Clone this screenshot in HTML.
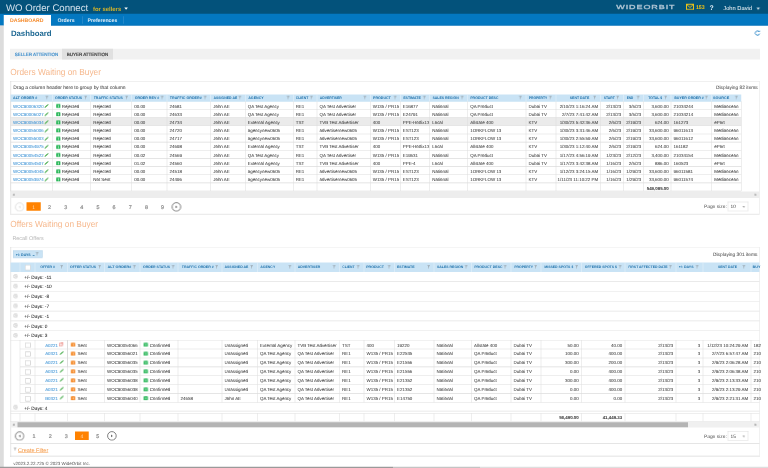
<!DOCTYPE html><html><head><meta charset="utf-8"><title>Dashboard</title><style>
*{box-sizing:border-box;margin:0;padding:0}
html,body{width:768px;height:468px;overflow:hidden;background:#fff}
body{font-family:"Liberation Sans",sans-serif;position:relative;color:#333;text-rendering:geometricPrecision;-webkit-font-smoothing:antialiased}
#root{position:absolute;left:0;top:0;width:3072px;height:1872px;transform:scale(.25);transform-origin:0 0;transform-style:preserve-3d}
.a{position:absolute;white-space:nowrap;line-height:1}
.t{font-size:17.8px;color:#444;-webkit-text-stroke:0.2px currentColor}
.h{font-size:14.4px;font-weight:bold;color:#2173ac}
.lnk{color:#3f94d6}
.r{text-align:right}
</style></head><body><div id="root">
<div class="a" style="left:0px;top:0px;width:3072px;height:56px;background:#03527b;"></div>
<div class="a" style="left:0px;top:55.2px;width:3072px;height:46.8px;background:#0378c1;"></div>
<div class="a" style="left:0px;top:99.2px;width:3072px;height:2.8px;background:#0670b8;"></div>
<div class="a" style="left:0px;top:102px;width:14.8px;height:1768px;background:#dcdcdc;"></div>
<div class="a" style="left:15.2px;top:59.6px;width:188.8px;height:44px;background:#fff;"></div>
<div class="a " style="left:24px;top:12px;font-size:38.4px;color:#d5e3ee;">WO Order Connect</div>
<div class="a " style="left:372px;top:24px;font-size:23.6px;color:#d8b528;font-weight:bold;">for sellers</div>
<svg class="a" style="left:495.6px;top:27.6px" width="16.8" height="12.8" viewBox="0 0 4 3"><path d="M0.3 0.4L3.7 0.4L2 2.6Z" fill="#fff"/></svg>
<div class="a " style="left:40px;top:72.4px;font-size:20.6px;font-weight:bold;color:#f58a2a;">DASHBOARD</div>
<div class="a " style="left:230px;top:70.4px;font-size:20.8px;font-weight:bold;color:#e6f0f8;">Orders</div>
<div class="a " style="left:350px;top:70.4px;font-size:20.8px;font-weight:bold;color:#e6f0f8;">Preferences</div>
<div class="a" style="left:327.8px;top:65.2px;width:2px;height:30px;background:#4596d0;"></div>
<div class="a" style="left:492.2px;top:65.2px;width:2px;height:30px;background:#4596d0;"></div>
<div class="a " style="left:2465.2px;top:18.4px;font-size:23.2px;color:#b0c5d4;-webkit-text-stroke:1.2px currentColor;letter-spacing:2.4px;transform:scaleX(1.55);transform-origin:0 0;">WIDEORBIT</div>
<svg class="a" style="left:2743.6px;top:15.2px" width="32" height="25.2" viewBox="0 0 9 7"><rect x="0.5" y="0.6" width="8" height="5.8" fill="none" stroke="#f5c816" stroke-width="1.15"/><path d="M0.7 1L4.5 4L8.3 1" fill="none" stroke="#f5c816" stroke-width="0.95"/></svg>
<div class="a " style="left:2783.6px;top:17.2px;font-size:21.2px;color:#f2c314;font-weight:bold;">153</div>
<div class="a " style="left:2838.4px;top:15.6px;font-size:27.2px;color:#dcebf5;font-weight:bold;">?</div>
<div class="a " style="left:2893.2px;top:20px;font-size:23px;color:#fff;">John David</div>
<svg class="a" style="left:3025.2px;top:28.8px" width="16" height="12" viewBox="0 0 4 3"><path d="M0.3 0.4L3.7 0.4L2 2.6Z" fill="#fff"/></svg>
<div class="a " style="left:43.6px;top:118.8px;font-size:31.2px;font-weight:bold;color:#1c6792;">Dashboard</div>
<svg class="a" style="left:3018px;top:120px" width="24" height="24" viewBox="0 0 6 6"><path d="M4.6 1.6A2.2 2.2 0 1 0 5.1 3.6" fill="none" stroke="#2a86c7" stroke-width="0.9"/><path d="M3.4 1.9L5.3 2.1L5.2 0.3Z" fill="#2a86c7"/></svg>
<div class="a" style="left:40px;top:194.8px;width:3000px;height:43.6px;background:#f1f1f1;"></div>
<div class="a" style="left:248px;top:194.8px;width:204px;height:43.6px;background:#e0e0e0;"></div>
<div class="a " style="left:58.8px;top:208.4px;font-size:18px;color:#4390cc;-webkit-text-stroke:0.8px currentColor;">SELLER ATTENTION</div>
<div class="a " style="left:266.8px;top:208.4px;font-size:18px;color:#3c3c3c;-webkit-text-stroke:0.8px currentColor;">BUYER ATTENTION</div>
<div class="a " style="left:40.8px;top:271.6px;font-size:35.6px;color:#f6b88d;transform:scaleX(0.935);transform-origin:0 0;">Orders Waiting on Buyer</div>
<div class="a" style="left:41.2px;top:323.2px;width:2998px;height:534.8px;background:#fff;border:2.4px solid #d9d9d9;"></div>
<div class="a t" style="left:53.2px;top:341.2px;font-size:19.6px;color:#444;">Drag a column header here to group by that column</div>
<div class="a t" style="left:2864px;top:340.8px;font-size:19.28px;color:#555;">Displaying 82 items</div>
<div class="a" style="left:42px;top:377.6px;width:2923.2px;height:29.2px;background:#c9e3f5;"></div>
<div class="a h" style="left:52px;top:384.6px;transform:scaleX(1.0196);transform-origin:0 0;">ALT ORDER #</div>
<svg class="a" style="left:181.2px;top:383.2px" width="13.6" height="15.2" viewBox="0 0 34 38"><path d="M2 2L32 2L20 17L20 34L14 36L14 17Z" fill="#9aa7b0"/></svg>
<div class="a h" style="left:220px;top:384.6px;transform:scaleX(0.9761);transform-origin:0 0;">ORDER STATUS</div>
<svg class="a" style="left:336.4px;top:383.2px" width="13.6" height="15.2" viewBox="0 0 34 38"><path d="M2 2L32 2L20 17L20 34L14 36L14 17Z" fill="#9aa7b0"/></svg>
<div class="a" style="left:207.6px;top:377.6px;width:2.4px;height:29.2px;background:#e9f3fa;"></div>
<div class="a h" style="left:375.2px;top:384.6px;transform:scaleX(0.9649);transform-origin:0 0;">TRAFFIC STATUS</div>
<svg class="a" style="left:500px;top:383.2px" width="13.6" height="15.2" viewBox="0 0 34 38"><path d="M2 2L32 2L20 17L20 34L14 36L14 17Z" fill="#9aa7b0"/></svg>
<div class="a" style="left:361.6px;top:377.6px;width:2.4px;height:29.2px;background:#e9f3fa;"></div>
<div class="a h" style="left:538.8px;top:384.6px;transform:scaleX(1.0079);transform-origin:0 0;">ORDER REV #</div>
<svg class="a" style="left:642.4px;top:383.2px" width="13.6" height="15.2" viewBox="0 0 34 38"><path d="M2 2L32 2L20 17L20 34L14 36L14 17Z" fill="#9aa7b0"/></svg>
<div class="a" style="left:525.6px;top:377.6px;width:2.4px;height:29.2px;background:#e9f3fa;"></div>
<div class="a h" style="left:678.8px;top:384.6px;transform:scaleX(1.0191);transform-origin:0 0;">TRAFFIC ORDER#</div>
<svg class="a" style="left:814.4px;top:383.2px" width="13.6" height="15.2" viewBox="0 0 34 38"><path d="M2 2L32 2L20 17L20 34L14 36L14 17Z" fill="#9aa7b0"/></svg>
<div class="a" style="left:666.8px;top:377.6px;width:2.4px;height:29.2px;background:#e9f3fa;"></div>
<div class="a h" style="left:854px;top:384.6px;transform:scaleX(0.9606);transform-origin:0 0;">ASSIGNED AE</div>
<svg class="a" style="left:953.2px;top:383.2px" width="13.6" height="15.2" viewBox="0 0 34 38"><path d="M2 2L32 2L20 17L20 34L14 36L14 17Z" fill="#9aa7b0"/></svg>
<div class="a" style="left:841.6px;top:377.6px;width:2.4px;height:29.2px;background:#e9f3fa;"></div>
<div class="a h" style="left:993.2px;top:384.6px;transform:scaleX(0.9998);transform-origin:0 0;">AGENCY</div>
<svg class="a" style="left:1146px;top:383.2px" width="13.6" height="15.2" viewBox="0 0 34 38"><path d="M2 2L32 2L20 17L20 34L14 36L14 17Z" fill="#9aa7b0"/></svg>
<div class="a" style="left:979.6px;top:377.6px;width:2.4px;height:29.2px;background:#e9f3fa;"></div>
<div class="a h" style="left:1183.2px;top:384.6px;transform:scaleX(0.9616);transform-origin:0 0;">CLIENT</div>
<svg class="a" style="left:1239.2px;top:383.2px" width="13.6" height="15.2" viewBox="0 0 34 38"><path d="M2 2L32 2L20 17L20 34L14 36L14 17Z" fill="#9aa7b0"/></svg>
<div class="a" style="left:1171.6px;top:377.6px;width:2.4px;height:29.2px;background:#e9f3fa;"></div>
<div class="a h" style="left:1278.8px;top:384.6px;transform:scaleX(0.9481);transform-origin:0 0;">ADVERTISER</div>
<svg class="a" style="left:1453.2px;top:383.2px" width="13.6" height="15.2" viewBox="0 0 34 38"><path d="M2 2L32 2L20 17L20 34L14 36L14 17Z" fill="#9aa7b0"/></svg>
<div class="a" style="left:1266.8px;top:377.6px;width:2.4px;height:29.2px;background:#e9f3fa;"></div>
<div class="a h" style="left:1492px;top:384.6px;transform:scaleX(1.0000);transform-origin:0 0;">PRODUCT</div>
<svg class="a" style="left:1574.4px;top:383.2px" width="13.6" height="15.2" viewBox="0 0 34 38"><path d="M2 2L32 2L20 17L20 34L14 36L14 17Z" fill="#9aa7b0"/></svg>
<div class="a" style="left:1479.6px;top:377.6px;width:2.4px;height:29.2px;background:#e9f3fa;"></div>
<div class="a h" style="left:1613.2px;top:384.6px;transform:scaleX(0.9758);transform-origin:0 0;">ESTIMATE</div>
<svg class="a" style="left:1691.2px;top:383.2px" width="13.6" height="15.2" viewBox="0 0 34 38"><path d="M2 2L32 2L20 17L20 34L14 36L14 17Z" fill="#9aa7b0"/></svg>
<div class="a" style="left:1599.6px;top:377.6px;width:2.4px;height:29.2px;background:#e9f3fa;"></div>
<div class="a h" style="left:1730px;top:384.6px;transform:scaleX(0.9631);transform-origin:0 0;">SALES REGION</div>
<svg class="a" style="left:1842.4px;top:383.2px" width="13.6" height="15.2" viewBox="0 0 34 38"><path d="M2 2L32 2L20 17L20 34L14 36L14 17Z" fill="#9aa7b0"/></svg>
<div class="a" style="left:1717.6px;top:377.6px;width:2.4px;height:29.2px;background:#e9f3fa;"></div>
<div class="a h" style="left:1881.2px;top:384.6px;transform:scaleX(0.9791);transform-origin:0 0;">PRODUCT DESC</div>
<svg class="a" style="left:2075.2px;top:383.2px" width="13.6" height="15.2" viewBox="0 0 34 38"><path d="M2 2L32 2L20 17L20 34L14 36L14 17Z" fill="#9aa7b0"/></svg>
<div class="a" style="left:1869.6px;top:377.6px;width:2.4px;height:29.2px;background:#e9f3fa;"></div>
<div class="a h" style="left:2114.8px;top:384.6px;transform:scaleX(0.9392);transform-origin:0 0;">PROPERTY</div>
<svg class="a" style="left:2195.2px;top:383.2px" width="13.6" height="15.2" viewBox="0 0 34 38"><path d="M2 2L32 2L20 17L20 34L14 36L14 17Z" fill="#9aa7b0"/></svg>
<div class="a" style="left:2102.8px;top:377.6px;width:2.4px;height:29.2px;background:#e9f3fa;"></div>
<div class="a h" style="left:2278.8px;top:384.6px;transform:scaleX(0.9685);transform-origin:0 0;">SENT DATE</div>
<svg class="a" style="left:2372.4px;top:383.2px" width="13.6" height="15.2" viewBox="0 0 34 38"><path d="M2 2L32 2L20 17L20 34L14 36L14 17Z" fill="#9aa7b0"/></svg>
<div class="a" style="left:2222.8px;top:377.6px;width:2.4px;height:29.2px;background:#e9f3fa;"></div>
<div class="a h" style="left:2414.8px;top:384.6px;transform:scaleX(0.9376);transform-origin:0 0;">START</div>
<svg class="a" style="left:2464px;top:383.2px" width="13.6" height="15.2" viewBox="0 0 34 38"><path d="M2 2L32 2L20 17L20 34L14 36L14 17Z" fill="#9aa7b0"/></svg>
<div class="a" style="left:2400.8px;top:377.6px;width:2.4px;height:29.2px;background:#e9f3fa;"></div>
<div class="a h" style="left:2506.8px;top:384.6px;transform:scaleX(0.8683);transform-origin:0 0;">END</div>
<svg class="a" style="left:2546px;top:383.2px" width="13.6" height="15.2" viewBox="0 0 34 38"><path d="M2 2L32 2L20 17L20 34L14 36L14 17Z" fill="#9aa7b0"/></svg>
<div class="a" style="left:2492.8px;top:377.6px;width:2.4px;height:29.2px;background:#e9f3fa;"></div>
<div class="a h" style="left:2592.8px;top:384.6px;transform:scaleX(0.9519);transform-origin:0 0;">TOTAL $</div>
<svg class="a" style="left:2656.4px;top:383.2px" width="13.6" height="15.2" viewBox="0 0 34 38"><path d="M2 2L32 2L20 17L20 34L14 36L14 17Z" fill="#9aa7b0"/></svg>
<div class="a" style="left:2572.8px;top:377.6px;width:2.4px;height:29.2px;background:#e9f3fa;"></div>
<div class="a h" style="left:2696.8px;top:384.6px;transform:scaleX(0.9998);transform-origin:0 0;">BUYER ORDER #</div>
<svg class="a" style="left:2819.2px;top:383.2px" width="13.6" height="15.2" viewBox="0 0 34 38"><path d="M2 2L32 2L20 17L20 34L14 36L14 17Z" fill="#9aa7b0"/></svg>
<div class="a" style="left:2682.8px;top:377.6px;width:2.4px;height:29.2px;background:#e9f3fa;"></div>
<div class="a h" style="left:2852px;top:384.6px;transform:scaleX(1.0518);transform-origin:0 0;">SOURCE</div>
<svg class="a" style="left:2939.2px;top:383.2px" width="13.6" height="15.2" viewBox="0 0 34 38"><path d="M2 2L32 2L20 17L20 34L14 36L14 17Z" fill="#9aa7b0"/></svg>
<div class="a" style="left:2845.6px;top:377.6px;width:2.4px;height:29.2px;background:#e9f3fa;"></div>
<div class="a" style="left:42px;top:436.64px;width:2923.2px;height:2.4px;background:#dcdcdc;"></div>
<div class="a t lnk" style="left:52px;top:416.2px;">WOC90006320</div>
<svg class="a" style="left:176px;top:416px" width="19.2" height="17.2" viewBox="0 0 44 44" preserveAspectRatio="none"><path d="M4 40L8 28L30 6L38 14L16 36Z" fill="#4caf50"/><path d="M32 4L36 0L44 8L40 12Z" fill="#3a9a3f"/></svg>
<svg class="a" style="left:224px;top:415.4px" width="18.8" height="18" viewBox="0 0 48 48" preserveAspectRatio="none"><rect x="2" y="2" width="44" height="44" rx="7" fill="#2ab759"/><path d="M24 12L33 24L27 24L27 36L21 36L21 24L15 24Z" fill="#fff" opacity="0.8"/></svg>
<div class="a t" style="left:246.8px;top:416.2px;">Rejected</div>
<div class="a t" style="left:372.8px;top:416.2px;">Rejected</div>
<div class="a t" style="left:536.8px;top:416.2px;">00.00</div>
<div class="a t" style="left:678px;top:416.2px;">24681</div>
<div class="a t" style="left:852.8px;top:416.2px;">John AE</div>
<div class="a t" style="left:990.8px;top:416.2px;">QA Test Agency</div>
<div class="a t" style="left:1182.8px;top:416.2px;">RE1</div>
<div class="a t" style="left:1278px;top:416.2px;">QA Test Advertiser</div>
<div class="a t" style="left:1490.8px;top:416.2px;">W135 / PR15</div>
<div class="a t" style="left:1610.8px;top:416.2px;">E16877</div>
<div class="a t" style="left:1728.8px;top:416.2px;">National</div>
<div class="a t" style="left:1880.8px;top:416.2px;">QA Product</div>
<div class="a t" style="left:2114px;top:416.2px;">Dubai TV</div>
<div class="a t r" style="left:2224px;top:416.2px;width:168.8px;">2/10/23 1:16:24 AM</div>
<div class="a t r" style="left:2402px;top:416.2px;width:82.8px;">2/13/23</div>
<div class="a t r" style="left:2494px;top:416.2px;width:70.8px;">3/5/23</div>
<div class="a t r" style="left:2574px;top:416.2px;width:100.8px;">3,600.00</div>
<div class="a t" style="left:2694px;top:416.2px;">21034244</div>
<div class="a t" style="left:2856.8px;top:416.2px;">Mediaocean</div>
<div class="a" style="left:42px;top:469.28px;width:2923.2px;height:2.4px;background:#dcdcdc;"></div>
<div class="a t lnk" style="left:52px;top:448.84px;">WOC90006027</div>
<svg class="a" style="left:176px;top:448.64px" width="19.2" height="17.2" viewBox="0 0 44 44" preserveAspectRatio="none"><path d="M4 40L8 28L30 6L38 14L16 36Z" fill="#4caf50"/><path d="M32 4L36 0L44 8L40 12Z" fill="#3a9a3f"/></svg>
<svg class="a" style="left:224px;top:448.04px" width="18.8" height="18" viewBox="0 0 48 48" preserveAspectRatio="none"><rect x="2" y="2" width="44" height="44" rx="7" fill="#2ab759"/><path d="M24 12L33 24L27 24L27 36L21 36L21 24L15 24Z" fill="#fff" opacity="0.8"/></svg>
<div class="a t" style="left:246.8px;top:448.84px;">Rejected</div>
<div class="a t" style="left:372.8px;top:448.84px;">Rejected</div>
<div class="a t" style="left:536.8px;top:448.84px;">00.00</div>
<div class="a t" style="left:678px;top:448.84px;">24633</div>
<div class="a t" style="left:852.8px;top:448.84px;">John AE</div>
<div class="a t" style="left:990.8px;top:448.84px;">QA Test Agency</div>
<div class="a t" style="left:1182.8px;top:448.84px;">RE1</div>
<div class="a t" style="left:1278px;top:448.84px;">QA Test Advertiser</div>
<div class="a t" style="left:1490.8px;top:448.84px;">W135 / PR15</div>
<div class="a t" style="left:1610.8px;top:448.84px;">E24791</div>
<div class="a t" style="left:1728.8px;top:448.84px;">National</div>
<div class="a t" style="left:1880.8px;top:448.84px;">QA Product</div>
<div class="a t" style="left:2114px;top:448.84px;">Dubai TV</div>
<div class="a t r" style="left:2224px;top:448.84px;width:168.8px;">2/7/23 7:41:42 AM</div>
<div class="a t r" style="left:2402px;top:448.84px;width:82.8px;">2/13/23</div>
<div class="a t r" style="left:2494px;top:448.84px;width:70.8px;">3/5/23</div>
<div class="a t r" style="left:2574px;top:448.84px;width:100.8px;">3,600.00</div>
<div class="a t" style="left:2694px;top:448.84px;">21034214</div>
<div class="a t" style="left:2856.8px;top:448.84px;">Mediaocean</div>
<div class="a" style="left:42px;top:470.48px;width:2923.2px;height:32.64px;background:#ebebeb;"></div>
<div class="a" style="left:42px;top:501.92px;width:2923.2px;height:2.4px;background:#dcdcdc;"></div>
<div class="a t lnk" style="left:52px;top:481.48px;">WOC90055034</div>
<svg class="a" style="left:176px;top:481.28px" width="19.2" height="17.2" viewBox="0 0 44 44" preserveAspectRatio="none"><path d="M4 40L8 28L30 6L38 14L16 36Z" fill="#4caf50"/><path d="M32 4L36 0L44 8L40 12Z" fill="#3a9a3f"/></svg>
<svg class="a" style="left:224px;top:480.68px" width="18.8" height="18" viewBox="0 0 48 48" preserveAspectRatio="none"><rect x="2" y="2" width="44" height="44" rx="7" fill="#2ab759"/><path d="M24 12L33 24L27 24L27 36L21 36L21 24L15 24Z" fill="#fff" opacity="0.8"/></svg>
<div class="a t" style="left:246.8px;top:481.48px;">Rejected</div>
<div class="a t" style="left:372.8px;top:481.48px;">Rejected</div>
<div class="a t" style="left:536.8px;top:481.48px;">00.00</div>
<div class="a t" style="left:678px;top:481.48px;">24734</div>
<div class="a t" style="left:852.8px;top:481.48px;">John AE</div>
<div class="a t" style="left:990.8px;top:481.48px;">External Agency</div>
<div class="a t" style="left:1182.8px;top:481.48px;">TST</div>
<div class="a t" style="left:1278px;top:481.48px;">TVB Test Advertiser</div>
<div class="a t" style="left:1490.8px;top:481.48px;">400</div>
<div class="a t" style="left:1610.8px;top:481.48px;">PPE-Hotfix13</div>
<div class="a t" style="left:1728.8px;top:481.48px;">Local</div>
<div class="a t" style="left:1880.8px;top:481.48px;">Allstate 400</div>
<div class="a t" style="left:2114px;top:481.48px;">KTV</div>
<div class="a t r" style="left:2224px;top:481.48px;width:168.8px;">1/30/23 5:42:36 AM</div>
<div class="a t r" style="left:2402px;top:481.48px;width:82.8px;">2/6/23</div>
<div class="a t r" style="left:2494px;top:481.48px;width:70.8px;">2/19/23</div>
<div class="a t r" style="left:2574px;top:481.48px;width:100.8px;">624.00</div>
<div class="a t" style="left:2694px;top:481.48px;">161273</div>
<div class="a t" style="left:2856.8px;top:481.48px;">ePort</div>
<div class="a" style="left:42px;top:534.56px;width:2923.2px;height:2.4px;background:#dcdcdc;"></div>
<div class="a t lnk" style="left:52px;top:514.12px;">WOC90055006</div>
<svg class="a" style="left:176px;top:513.92px" width="19.2" height="17.2" viewBox="0 0 44 44" preserveAspectRatio="none"><path d="M4 40L8 28L30 6L38 14L16 36Z" fill="#4caf50"/><path d="M32 4L36 0L44 8L40 12Z" fill="#3a9a3f"/></svg>
<svg class="a" style="left:224px;top:513.32px" width="18.8" height="18" viewBox="0 0 48 48" preserveAspectRatio="none"><rect x="2" y="2" width="44" height="44" rx="7" fill="#2ab759"/><path d="M24 12L33 24L27 24L27 36L21 36L21 24L15 24Z" fill="#fff" opacity="0.8"/></svg>
<div class="a t" style="left:246.8px;top:514.12px;">Rejected</div>
<div class="a t" style="left:372.8px;top:514.12px;">Rejected</div>
<div class="a t" style="left:536.8px;top:514.12px;">00.00</div>
<div class="a t" style="left:678px;top:514.12px;">24720</div>
<div class="a t" style="left:852.8px;top:514.12px;">John AE</div>
<div class="a t" style="left:990.8px;top:514.12px;">agencynew0605</div>
<div class="a t" style="left:1182.8px;top:514.12px;">RE1</div>
<div class="a t" style="left:1278px;top:514.12px;">advertisernew0605</div>
<div class="a t" style="left:1490.8px;top:514.12px;">W135 / PR15</div>
<div class="a t" style="left:1610.8px;top:514.12px;">EST123</div>
<div class="a t" style="left:1728.8px;top:514.12px;">National</div>
<div class="a t" style="left:1880.8px;top:514.12px;">1ORKFLOW 13</div>
<div class="a t" style="left:2114px;top:514.12px;">KTV</div>
<div class="a t r" style="left:2224px;top:514.12px;width:168.8px;">1/30/23 3:31:46 AM</div>
<div class="a t r" style="left:2402px;top:514.12px;width:82.8px;">2/6/23</div>
<div class="a t r" style="left:2494px;top:514.12px;width:70.8px;">2/19/23</div>
<div class="a t r" style="left:2574px;top:514.12px;width:100.8px;">33,600.00</div>
<div class="a t" style="left:2694px;top:514.12px;">96011613</div>
<div class="a t" style="left:2856.8px;top:514.12px;">Mediaocean</div>
<div class="a" style="left:42px;top:567.2px;width:2923.2px;height:2.4px;background:#dcdcdc;"></div>
<div class="a t lnk" style="left:52px;top:546.76px;">WOC90055003</div>
<svg class="a" style="left:176px;top:546.56px" width="19.2" height="17.2" viewBox="0 0 44 44" preserveAspectRatio="none"><path d="M4 40L8 28L30 6L38 14L16 36Z" fill="#4caf50"/><path d="M32 4L36 0L44 8L40 12Z" fill="#3a9a3f"/></svg>
<svg class="a" style="left:224px;top:545.96px" width="18.8" height="18" viewBox="0 0 48 48" preserveAspectRatio="none"><rect x="2" y="2" width="44" height="44" rx="7" fill="#2ab759"/><path d="M24 12L33 24L27 24L27 36L21 36L21 24L15 24Z" fill="#fff" opacity="0.8"/></svg>
<div class="a t" style="left:246.8px;top:546.76px;">Rejected</div>
<div class="a t" style="left:372.8px;top:546.76px;">Rejected</div>
<div class="a t" style="left:536.8px;top:546.76px;">00.00</div>
<div class="a t" style="left:678px;top:546.76px;">24717</div>
<div class="a t" style="left:852.8px;top:546.76px;">John AE</div>
<div class="a t" style="left:990.8px;top:546.76px;">agencynew0605</div>
<div class="a t" style="left:1182.8px;top:546.76px;">RE1</div>
<div class="a t" style="left:1278px;top:546.76px;">advertisernew0605</div>
<div class="a t" style="left:1490.8px;top:546.76px;">W135 / PR15</div>
<div class="a t" style="left:1610.8px;top:546.76px;">EST123</div>
<div class="a t" style="left:1728.8px;top:546.76px;">National</div>
<div class="a t" style="left:1880.8px;top:546.76px;">1ORKFLOW 13</div>
<div class="a t" style="left:2114px;top:546.76px;">KTV</div>
<div class="a t r" style="left:2224px;top:546.76px;width:168.8px;">1/30/23 2:55:59 AM</div>
<div class="a t r" style="left:2402px;top:546.76px;width:82.8px;">2/6/23</div>
<div class="a t r" style="left:2494px;top:546.76px;width:70.8px;">2/19/23</div>
<div class="a t r" style="left:2574px;top:546.76px;width:100.8px;">33,600.00</div>
<div class="a t" style="left:2694px;top:546.76px;">96011612</div>
<div class="a t" style="left:2856.8px;top:546.76px;">Mediaocean</div>
<div class="a" style="left:42px;top:599.84px;width:2923.2px;height:2.4px;background:#dcdcdc;"></div>
<div class="a t lnk" style="left:52px;top:579.4px;">WOC90054975</div>
<svg class="a" style="left:176px;top:579.2px" width="19.2" height="17.2" viewBox="0 0 44 44" preserveAspectRatio="none"><path d="M4 40L8 28L30 6L38 14L16 36Z" fill="#4caf50"/><path d="M32 4L36 0L44 8L40 12Z" fill="#3a9a3f"/></svg>
<svg class="a" style="left:224px;top:578.6px" width="18.8" height="18" viewBox="0 0 48 48" preserveAspectRatio="none"><rect x="2" y="2" width="44" height="44" rx="7" fill="#2ab759"/><path d="M24 12L33 24L27 24L27 36L21 36L21 24L15 24Z" fill="#fff" opacity="0.8"/></svg>
<div class="a t" style="left:246.8px;top:579.4px;">Rejected</div>
<div class="a t" style="left:372.8px;top:579.4px;">Rejected</div>
<div class="a t" style="left:536.8px;top:579.4px;">00.00</div>
<div class="a t" style="left:678px;top:579.4px;">24698</div>
<div class="a t" style="left:852.8px;top:579.4px;">John AE</div>
<div class="a t" style="left:990.8px;top:579.4px;">External Agency</div>
<div class="a t" style="left:1182.8px;top:579.4px;">TST</div>
<div class="a t" style="left:1278px;top:579.4px;">TVB Test Advertiser</div>
<div class="a t" style="left:1490.8px;top:579.4px;">400</div>
<div class="a t" style="left:1610.8px;top:579.4px;">PPE-Hotfix13</div>
<div class="a t" style="left:1728.8px;top:579.4px;">Local</div>
<div class="a t" style="left:1880.8px;top:579.4px;">Allstate 400</div>
<div class="a t" style="left:2114px;top:579.4px;">KTV</div>
<div class="a t r" style="left:2224px;top:579.4px;width:168.8px;">1/30/23 1:12:40 AM</div>
<div class="a t r" style="left:2402px;top:579.4px;width:82.8px;">2/6/23</div>
<div class="a t r" style="left:2494px;top:579.4px;width:70.8px;">2/19/23</div>
<div class="a t r" style="left:2574px;top:579.4px;width:100.8px;">624.00</div>
<div class="a t" style="left:2694px;top:579.4px;">161182</div>
<div class="a t" style="left:2856.8px;top:579.4px;">ePort</div>
<div class="a" style="left:42px;top:632.48px;width:2923.2px;height:2.4px;background:#dcdcdc;"></div>
<div class="a t lnk" style="left:52px;top:612.04px;">WOC90054522</div>
<svg class="a" style="left:176px;top:611.84px" width="19.2" height="17.2" viewBox="0 0 44 44" preserveAspectRatio="none"><path d="M4 40L8 28L30 6L38 14L16 36Z" fill="#4caf50"/><path d="M32 4L36 0L44 8L40 12Z" fill="#3a9a3f"/></svg>
<svg class="a" style="left:224px;top:611.24px" width="18.8" height="18" viewBox="0 0 48 48" preserveAspectRatio="none"><rect x="2" y="2" width="44" height="44" rx="7" fill="#2ab759"/><path d="M24 12L33 24L27 24L27 36L21 36L21 24L15 24Z" fill="#fff" opacity="0.8"/></svg>
<div class="a t" style="left:246.8px;top:612.04px;">Rejected</div>
<div class="a t" style="left:372.8px;top:612.04px;">Rejected</div>
<div class="a t" style="left:536.8px;top:612.04px;">00.02</div>
<div class="a t" style="left:678px;top:612.04px;">24569</div>
<div class="a t" style="left:852.8px;top:612.04px;">John AE</div>
<div class="a t" style="left:990.8px;top:612.04px;">QA Test Agency</div>
<div class="a t" style="left:1182.8px;top:612.04px;">RE1</div>
<div class="a t" style="left:1278px;top:612.04px;">QA Test Advertiser</div>
<div class="a t" style="left:1490.8px;top:612.04px;">W135 / PR15</div>
<div class="a t" style="left:1610.8px;top:612.04px;">E19531</div>
<div class="a t" style="left:1728.8px;top:612.04px;">National</div>
<div class="a t" style="left:1880.8px;top:612.04px;">QA Product</div>
<div class="a t" style="left:2114px;top:612.04px;">Dubai TV</div>
<div class="a t r" style="left:2224px;top:612.04px;width:168.8px;">1/17/23 4:56:19 AM</div>
<div class="a t r" style="left:2402px;top:612.04px;width:82.8px;">1/23/23</div>
<div class="a t r" style="left:2494px;top:612.04px;width:70.8px;">2/12/23</div>
<div class="a t r" style="left:2574px;top:612.04px;width:100.8px;">3,400.00</div>
<div class="a t" style="left:2694px;top:612.04px;">21034154</div>
<div class="a t" style="left:2856.8px;top:612.04px;">Mediaocean</div>
<div class="a" style="left:42px;top:665.12px;width:2923.2px;height:2.4px;background:#dcdcdc;"></div>
<div class="a t lnk" style="left:52px;top:644.68px;">WOC90054507</div>
<svg class="a" style="left:176px;top:644.48px" width="19.2" height="17.2" viewBox="0 0 44 44" preserveAspectRatio="none"><path d="M4 40L8 28L30 6L38 14L16 36Z" fill="#4caf50"/><path d="M32 4L36 0L44 8L40 12Z" fill="#3a9a3f"/></svg>
<svg class="a" style="left:224px;top:643.88px" width="18.8" height="18" viewBox="0 0 48 48" preserveAspectRatio="none"><rect x="2" y="2" width="44" height="44" rx="7" fill="#2ab759"/><path d="M24 12L33 24L27 24L27 36L21 36L21 24L15 24Z" fill="#fff" opacity="0.8"/></svg>
<div class="a t" style="left:246.8px;top:644.68px;">Rejected</div>
<div class="a t" style="left:372.8px;top:644.68px;">Rejected</div>
<div class="a t" style="left:536.8px;top:644.68px;">01.02</div>
<div class="a t" style="left:678px;top:644.68px;">24560</div>
<div class="a t" style="left:852.8px;top:644.68px;">John AE</div>
<div class="a t" style="left:990.8px;top:644.68px;">External Agency</div>
<div class="a t" style="left:1182.8px;top:644.68px;">TST</div>
<div class="a t" style="left:1278px;top:644.68px;">TVB Test Advertiser</div>
<div class="a t" style="left:1490.8px;top:644.68px;">400</div>
<div class="a t" style="left:1610.8px;top:644.68px;">PPE-4</div>
<div class="a t" style="left:1728.8px;top:644.68px;">Local</div>
<div class="a t" style="left:1880.8px;top:644.68px;">Allstate 400</div>
<div class="a t" style="left:2114px;top:644.68px;">Dubai TV</div>
<div class="a t r" style="left:2224px;top:644.68px;width:168.8px;">1/17/23 3:42:38 AM</div>
<div class="a t r" style="left:2402px;top:644.68px;width:82.8px;">1/16/23</div>
<div class="a t r" style="left:2494px;top:644.68px;width:70.8px;">2/5/23</div>
<div class="a t r" style="left:2574px;top:644.68px;width:100.8px;">886.00</div>
<div class="a t" style="left:2694px;top:644.68px;">160523</div>
<div class="a t" style="left:2856.8px;top:644.68px;">ePort</div>
<div class="a" style="left:42px;top:697.76px;width:2923.2px;height:2.4px;background:#dcdcdc;"></div>
<div class="a t lnk" style="left:52px;top:677.32px;">WOC90054045</div>
<svg class="a" style="left:176px;top:677.12px" width="19.2" height="17.2" viewBox="0 0 44 44" preserveAspectRatio="none"><path d="M4 40L8 28L30 6L38 14L16 36Z" fill="#4caf50"/><path d="M32 4L36 0L44 8L40 12Z" fill="#3a9a3f"/></svg>
<svg class="a" style="left:224px;top:676.52px" width="18.8" height="18" viewBox="0 0 48 48" preserveAspectRatio="none"><rect x="2" y="2" width="44" height="44" rx="7" fill="#2ab759"/><path d="M24 12L33 24L27 24L27 36L21 36L21 24L15 24Z" fill="#fff" opacity="0.8"/></svg>
<div class="a t" style="left:246.8px;top:677.32px;">Rejected</div>
<div class="a t" style="left:372.8px;top:677.32px;">Rejected</div>
<div class="a t" style="left:536.8px;top:677.32px;">00.00</div>
<div class="a t" style="left:678px;top:677.32px;">24518</div>
<div class="a t" style="left:852.8px;top:677.32px;">John AE</div>
<div class="a t" style="left:990.8px;top:677.32px;">agencynew0605</div>
<div class="a t" style="left:1182.8px;top:677.32px;">RE1</div>
<div class="a t" style="left:1278px;top:677.32px;">advertisernew0605</div>
<div class="a t" style="left:1490.8px;top:677.32px;">W135 / PR15</div>
<div class="a t" style="left:1610.8px;top:677.32px;">EST123</div>
<div class="a t" style="left:1728.8px;top:677.32px;">National</div>
<div class="a t" style="left:1880.8px;top:677.32px;">1ORKFLOW 13</div>
<div class="a t" style="left:2114px;top:677.32px;">KTV</div>
<div class="a t r" style="left:2224px;top:677.32px;width:168.8px;">1/12/23 3:24:15 AM</div>
<div class="a t r" style="left:2402px;top:677.32px;width:82.8px;">1/16/23</div>
<div class="a t r" style="left:2494px;top:677.32px;width:70.8px;">1/29/23</div>
<div class="a t r" style="left:2574px;top:677.32px;width:100.8px;">33,600.00</div>
<div class="a t" style="left:2694px;top:677.32px;">96011581</div>
<div class="a t" style="left:2856.8px;top:677.32px;">Mediaocean</div>
<div class="a" style="left:42px;top:730.4px;width:2923.2px;height:2.4px;background:#dcdcdc;"></div>
<div class="a t lnk" style="left:52px;top:709.96px;">WOC90053974</div>
<svg class="a" style="left:176px;top:709.76px" width="19.2" height="17.2" viewBox="0 0 44 44" preserveAspectRatio="none"><path d="M4 40L8 28L30 6L38 14L16 36Z" fill="#4caf50"/><path d="M32 4L36 0L44 8L40 12Z" fill="#3a9a3f"/></svg>
<svg class="a" style="left:224px;top:709.16px" width="18.8" height="18" viewBox="0 0 48 48" preserveAspectRatio="none"><rect x="2" y="2" width="44" height="44" rx="7" fill="#2ab759"/><path d="M24 12L33 24L27 24L27 36L21 36L21 24L15 24Z" fill="#fff" opacity="0.8"/></svg>
<div class="a t" style="left:246.8px;top:709.96px;">Rejected</div>
<div class="a t" style="left:372.8px;top:709.96px;">Not Sent</div>
<div class="a t" style="left:536.8px;top:709.96px;">00.00</div>
<div class="a t" style="left:678px;top:709.96px;">24496</div>
<div class="a t" style="left:852.8px;top:709.96px;">John AE</div>
<div class="a t" style="left:990.8px;top:709.96px;">agencynew0605</div>
<div class="a t" style="left:1182.8px;top:709.96px;">RE1</div>
<div class="a t" style="left:1278px;top:709.96px;">advertisernew0605</div>
<div class="a t" style="left:1490.8px;top:709.96px;">W135 / PR15</div>
<div class="a t" style="left:1610.8px;top:709.96px;">EST123</div>
<div class="a t" style="left:1728.8px;top:709.96px;">National</div>
<div class="a t" style="left:1880.8px;top:709.96px;">1ORKFLOW 13</div>
<div class="a t" style="left:2114px;top:709.96px;">KTV</div>
<div class="a t r" style="left:2224px;top:709.96px;width:168.8px;">1/11/23 11:10:22 PM</div>
<div class="a t r" style="left:2402px;top:709.96px;width:82.8px;">1/16/23</div>
<div class="a t r" style="left:2494px;top:709.96px;width:70.8px;">1/29/23</div>
<div class="a t r" style="left:2574px;top:709.96px;width:100.8px;">33,600.00</div>
<div class="a t" style="left:2694px;top:709.96px;">96011574</div>
<div class="a t" style="left:2856.8px;top:709.96px;">Mediaocean</div>
<div class="a" style="left:42px;top:763.2px;width:2923.2px;height:2.4px;background:#dcdcdc;"></div>
<div class="a t r" style="left:2574px;top:743.6px;width:100.8px;font-weight:bold;font-size:17.6px;">549,065.00</div>
<div class="a" style="left:40.8px;top:405.2px;width:2.4px;height:359.2px;background:#dcdcdc;"></div>
<div class="a" style="left:207.6px;top:405.2px;width:2.4px;height:359.2px;background:#dcdcdc;"></div>
<div class="a" style="left:361.6px;top:405.2px;width:2.4px;height:359.2px;background:#dcdcdc;"></div>
<div class="a" style="left:525.6px;top:405.2px;width:2.4px;height:359.2px;background:#dcdcdc;"></div>
<div class="a" style="left:666.8px;top:405.2px;width:2.4px;height:359.2px;background:#dcdcdc;"></div>
<div class="a" style="left:841.6px;top:405.2px;width:2.4px;height:359.2px;background:#dcdcdc;"></div>
<div class="a" style="left:979.6px;top:405.2px;width:2.4px;height:359.2px;background:#dcdcdc;"></div>
<div class="a" style="left:1171.6px;top:405.2px;width:2.4px;height:359.2px;background:#dcdcdc;"></div>
<div class="a" style="left:1266.8px;top:405.2px;width:2.4px;height:359.2px;background:#dcdcdc;"></div>
<div class="a" style="left:1479.6px;top:405.2px;width:2.4px;height:359.2px;background:#dcdcdc;"></div>
<div class="a" style="left:1599.6px;top:405.2px;width:2.4px;height:359.2px;background:#dcdcdc;"></div>
<div class="a" style="left:1717.6px;top:405.2px;width:2.4px;height:359.2px;background:#dcdcdc;"></div>
<div class="a" style="left:1869.6px;top:405.2px;width:2.4px;height:359.2px;background:#dcdcdc;"></div>
<div class="a" style="left:2102.8px;top:405.2px;width:2.4px;height:359.2px;background:#dcdcdc;"></div>
<div class="a" style="left:2222.8px;top:405.2px;width:2.4px;height:359.2px;background:#dcdcdc;"></div>
<div class="a" style="left:2400.8px;top:405.2px;width:2.4px;height:359.2px;background:#dcdcdc;"></div>
<div class="a" style="left:2492.8px;top:405.2px;width:2.4px;height:359.2px;background:#dcdcdc;"></div>
<div class="a" style="left:2572.8px;top:405.2px;width:2.4px;height:359.2px;background:#dcdcdc;"></div>
<div class="a" style="left:2682.8px;top:405.2px;width:2.4px;height:359.2px;background:#dcdcdc;"></div>
<div class="a" style="left:2845.6px;top:405.2px;width:2.4px;height:359.2px;background:#dcdcdc;"></div>
<div class="a" style="left:2964px;top:405.2px;width:2.4px;height:359.2px;background:#dcdcdc;"></div>
<div class="a" style="left:42.4px;top:765.6px;width:2995.6px;height:26.4px;background:#ededed;"></div>
<svg class="a" style="left:50.4px;top:773.6px" width="9.6" height="10.4" viewBox="0 0 24 26"><path d="M20 2L4 13L20 24Z" fill="#777"/></svg>
<svg class="a" style="left:3018.4px;top:773.6px" width="9.6" height="10.4" viewBox="0 0 24 26"><path d="M4 2L20 13L4 24Z" fill="#777"/></svg>
<svg class="a" style="left:58.8px;top:808.8px" width="38.4" height="38.4" viewBox="-4.8 -4.8 9.6 9.6"><circle cx="0" cy="0" r="4.2" fill="#fff" stroke="#dcdcdc" stroke-width="0.85"/><path d="M0.9 -1.3L-0.9 0L0.9 1.3Z" fill="#dcdcdc"/></svg>
<div class="a" style="left:106.4px;top:808.8px;width:56.8px;height:34.4px;background:#ff8200;"></div>
<div class="a " style="left:106.4px;top:817.6px;width:56.8px;text-align:center;font-size:20px;color:#ffd9ae;">1</div>
<div class="a " style="left:178px;top:817.6px;width:40px;text-align:center;font-size:21.6px;color:#8e8e8e;-webkit-text-stroke:0.88px currentColor;">2</div>
<div class="a " style="left:242.6px;top:817.6px;width:40px;text-align:center;font-size:21.6px;color:#8e8e8e;-webkit-text-stroke:0.88px currentColor;">3</div>
<div class="a " style="left:307.2px;top:817.6px;width:40px;text-align:center;font-size:21.6px;color:#8e8e8e;-webkit-text-stroke:0.88px currentColor;">4</div>
<div class="a " style="left:371.8px;top:817.6px;width:40px;text-align:center;font-size:21.6px;color:#8e8e8e;-webkit-text-stroke:0.88px currentColor;">5</div>
<div class="a " style="left:436.4px;top:817.6px;width:40px;text-align:center;font-size:21.6px;color:#8e8e8e;-webkit-text-stroke:0.88px currentColor;">6</div>
<div class="a " style="left:501px;top:817.6px;width:40px;text-align:center;font-size:21.6px;color:#8e8e8e;-webkit-text-stroke:0.88px currentColor;">7</div>
<div class="a " style="left:565.6px;top:817.6px;width:40px;text-align:center;font-size:21.6px;color:#8e8e8e;-webkit-text-stroke:0.88px currentColor;">8</div>
<div class="a " style="left:630.2px;top:817.6px;width:40px;text-align:center;font-size:21.6px;color:#8e8e8e;-webkit-text-stroke:0.88px currentColor;">9</div>
<svg class="a" style="left:686.4px;top:807.6px" width="39.2" height="39.2" viewBox="-4.8999999999999995 -4.8999999999999995 9.799999999999999 9.799999999999999"><circle cx="0" cy="0" r="4.3" fill="#fff" stroke="#686868" stroke-width="0.85"/><path d="M-0.9 -1.3L0.9 0L-0.9 1.3Z" fill="#686868"/></svg>
<div class="a " style="left:2815.6px;top:818px;font-size:19.6px;color:#555;">Page size:</div>
<div class="a" style="left:2910.8px;top:806.4px;width:83.2px;height:38.4px;background:#fff;border:2.4px solid #ddd;"></div>
<div class="a " style="left:2922.4px;top:818px;font-size:19.2px;color:#444;">10</div>
<svg class="a" style="left:2970.4px;top:824px" width="10.4" height="8" viewBox="0 0 26 20"><path d="M2 3L24 3L13 17Z" fill="#777"/></svg>
<div class="a " style="left:40.8px;top:877.2px;font-size:35.6px;color:#f6b88d;transform:scaleX(0.935);transform-origin:0 0;">Offers Waiting on Buyer</div>
<div class="a " style="left:49.6px;top:942.8px;font-size:21.8px;color:#b8b8b8;">Recall Offers</div>
<div class="a" style="left:41.2px;top:986.4px;width:2998px;height:839.6px;background:#fff;border:2.4px solid #d9d9d9;overflow:hidden;"></div>
<div class="a" style="left:52px;top:1001.2px;width:118.4px;height:31.2px;background:#c9e3f5;border:2px solid #b9d6ea;"></div>
<div class="a h" style="left:63.2px;top:1010.8px;">+/- DAYS</div>
<svg class="a" style="left:129.2px;top:1020px" width="9.6" height="4.8" viewBox="0 0 24 12"><path d="M0 0L24 0L24 12Z" fill="#1d6fa5"/></svg>
<svg class="a" style="left:142.4px;top:1008.4px" width="13.6" height="15.2" viewBox="0 0 34 38"><path d="M2 2L32 2L20 17L20 34L14 36L14 17Z" fill="#9aa7b0"/></svg>
<div class="a t" style="left:2852px;top:1008.4px;font-size:19.28px;color:#555;">Displaying 301 items</div>
<div class="a" style="left:42.4px;top:1049.6px;width:2995.6px;height:38.4px;background:#c9e3f5;"></div>
<div class="a" style="left:100px;top:1059.2px;width:23.2px;height:21.6px;background:#fff;border:2px solid #c8c8c8;border-radius:3.2px;"></div>
<div class="a" style="left:78.8px;top:1049.6px;width:2.4px;height:38.4px;background:#e9f3fa;"></div>
<div class="a" style="left:138.8px;top:1049.6px;width:2.4px;height:38.4px;background:#e9f3fa;"></div>
<div class="a h" style="left:160.8px;top:1062.4px;transform:scaleX(0.9670);transform-origin:0 0;">OFFER #</div>
<svg class="a" style="left:240px;top:1060.4px" width="13.6" height="15.2" viewBox="0 0 34 38"><path d="M2 2L32 2L20 17L20 34L14 36L14 17Z" fill="#9aa7b0"/></svg>
<div class="a" style="left:268px;top:1049.6px;width:2.4px;height:38.4px;background:#e9f3fa;"></div>
<div class="a h" style="left:280.4px;top:1062.4px;transform:scaleX(0.9606);transform-origin:0 0;">OFFER STATUS</div>
<svg class="a" style="left:392px;top:1060.4px" width="13.6" height="15.2" viewBox="0 0 34 38"><path d="M2 2L32 2L20 17L20 34L14 36L14 17Z" fill="#9aa7b0"/></svg>
<div class="a" style="left:416.8px;top:1049.6px;width:2.4px;height:38.4px;background:#e9f3fa;"></div>
<div class="a h" style="left:430px;top:1062.4px;transform:scaleX(1.0469);transform-origin:0 0;">ALT ORDER#</div>
<svg class="a" style="left:531.2px;top:1060.4px" width="13.6" height="15.2" viewBox="0 0 34 38"><path d="M2 2L32 2L20 17L20 34L14 36L14 17Z" fill="#9aa7b0"/></svg>
<div class="a" style="left:558.8px;top:1049.6px;width:2.4px;height:38.4px;background:#e9f3fa;"></div>
<div class="a h" style="left:572px;top:1062.4px;transform:scaleX(0.9689);transform-origin:0 0;">ORDER STATUS</div>
<svg class="a" style="left:686px;top:1060.4px" width="13.6" height="15.2" viewBox="0 0 34 38"><path d="M2 2L32 2L20 17L20 34L14 36L14 17Z" fill="#9aa7b0"/></svg>
<div class="a" style="left:710.8px;top:1049.6px;width:2.4px;height:38.4px;background:#e9f3fa;"></div>
<div class="a h" style="left:726.8px;top:1062.4px;transform:scaleX(0.9876);transform-origin:0 0;">TRAFFIC ORDER #</div>
<svg class="a" style="left:860.4px;top:1060.4px" width="13.6" height="15.2" viewBox="0 0 34 38"><path d="M2 2L32 2L20 17L20 34L14 36L14 17Z" fill="#9aa7b0"/></svg>
<div class="a" style="left:886.8px;top:1049.6px;width:2.4px;height:38.4px;background:#e9f3fa;"></div>
<div class="a h" style="left:898.4px;top:1062.4px;transform:scaleX(0.9687);transform-origin:0 0;">ASSIGNED AE</div>
<svg class="a" style="left:1000px;top:1060.4px" width="13.6" height="15.2" viewBox="0 0 34 38"><path d="M2 2L32 2L20 17L20 34L14 36L14 17Z" fill="#9aa7b0"/></svg>
<div class="a" style="left:1028.8px;top:1049.6px;width:2.4px;height:38.4px;background:#e9f3fa;"></div>
<div class="a h" style="left:1040.8px;top:1062.4px;transform:scaleX(0.9739);transform-origin:0 0;">AGENCY</div>
<svg class="a" style="left:1153.2px;top:1060.4px" width="13.6" height="15.2" viewBox="0 0 34 38"><path d="M2 2L32 2L20 17L20 34L14 36L14 17Z" fill="#9aa7b0"/></svg>
<div class="a" style="left:1178.8px;top:1049.6px;width:2.4px;height:38.4px;background:#e9f3fa;"></div>
<div class="a h" style="left:1190.8px;top:1062.4px;transform:scaleX(0.9697);transform-origin:0 0;">ADVERTISER</div>
<svg class="a" style="left:1330.4px;top:1060.4px" width="13.6" height="15.2" viewBox="0 0 34 38"><path d="M2 2L32 2L20 17L20 34L14 36L14 17Z" fill="#9aa7b0"/></svg>
<div class="a" style="left:1356.8px;top:1049.6px;width:2.4px;height:38.4px;background:#e9f3fa;"></div>
<div class="a h" style="left:1369.2px;top:1062.4px;transform:scaleX(0.9385);transform-origin:0 0;">CLIENT</div>
<svg class="a" style="left:1426px;top:1060.4px" width="13.6" height="15.2" viewBox="0 0 34 38"><path d="M2 2L32 2L20 17L20 34L14 36L14 17Z" fill="#9aa7b0"/></svg>
<div class="a" style="left:1454.8px;top:1049.6px;width:2.4px;height:38.4px;background:#e9f3fa;"></div>
<div class="a h" style="left:1464.8px;top:1062.4px;transform:scaleX(1.0000);transform-origin:0 0;">PRODUCT</div>
<svg class="a" style="left:1550.4px;top:1060.4px" width="13.6" height="15.2" viewBox="0 0 34 38"><path d="M2 2L32 2L20 17L20 34L14 36L14 17Z" fill="#9aa7b0"/></svg>
<div class="a" style="left:1576.8px;top:1049.6px;width:2.4px;height:38.4px;background:#e9f3fa;"></div>
<div class="a h" style="left:1588px;top:1062.4px;transform:scaleX(0.9758);transform-origin:0 0;">ESTIMATE</div>
<svg class="a" style="left:1708.4px;top:1060.4px" width="13.6" height="15.2" viewBox="0 0 34 38"><path d="M2 2L32 2L20 17L20 34L14 36L14 17Z" fill="#9aa7b0"/></svg>
<div class="a" style="left:1734.8px;top:1049.6px;width:2.4px;height:38.4px;background:#e9f3fa;"></div>
<div class="a h" style="left:1748px;top:1062.4px;transform:scaleX(0.9668);transform-origin:0 0;">SALES REGION</div>
<svg class="a" style="left:1858px;top:1060.4px" width="13.6" height="15.2" viewBox="0 0 34 38"><path d="M2 2L32 2L20 17L20 34L14 36L14 17Z" fill="#9aa7b0"/></svg>
<div class="a" style="left:1884.8px;top:1049.6px;width:2.4px;height:38.4px;background:#e9f3fa;"></div>
<div class="a h" style="left:1897.2px;top:1062.4px;transform:scaleX(0.9860);transform-origin:0 0;">PRODUCT DESC</div>
<svg class="a" style="left:2014.4px;top:1060.4px" width="13.6" height="15.2" viewBox="0 0 34 38"><path d="M2 2L32 2L20 17L20 34L14 36L14 17Z" fill="#9aa7b0"/></svg>
<div class="a" style="left:2042.8px;top:1049.6px;width:2.4px;height:38.4px;background:#e9f3fa;"></div>
<div class="a h" style="left:2056.8px;top:1062.4px;transform:scaleX(0.9493);transform-origin:0 0;">PROPERTY</div>
<svg class="a" style="left:2136.4px;top:1060.4px" width="13.6" height="15.2" viewBox="0 0 34 38"><path d="M2 2L32 2L20 17L20 34L14 36L14 17Z" fill="#9aa7b0"/></svg>
<div class="a" style="left:2162.8px;top:1049.6px;width:2.4px;height:38.4px;background:#e9f3fa;"></div>
<div class="a h" style="left:2176.8px;top:1062.4px;transform:scaleX(0.9697);transform-origin:0 0;">MISSED SPOTS $</div>
<svg class="a" style="left:2300px;top:1060.4px" width="13.6" height="15.2" viewBox="0 0 34 38"><path d="M2 2L32 2L20 17L20 34L14 36L14 17Z" fill="#9aa7b0"/></svg>
<div class="a" style="left:2324.8px;top:1049.6px;width:2.4px;height:38.4px;background:#e9f3fa;"></div>
<div class="a h" style="left:2339.2px;top:1062.4px;transform:scaleX(0.9639);transform-origin:0 0;">OFFERED SPOTS $</div>
<svg class="a" style="left:2474px;top:1060.4px" width="13.6" height="15.2" viewBox="0 0 34 38"><path d="M2 2L32 2L20 17L20 34L14 36L14 17Z" fill="#9aa7b0"/></svg>
<div class="a" style="left:2498.8px;top:1049.6px;width:2.4px;height:38.4px;background:#e9f3fa;"></div>
<div class="a h" style="left:2512.8px;top:1062.4px;transform:scaleX(0.9610);transform-origin:0 0;">FIRST AFFECTED DATE</div>
<svg class="a" style="left:2675.2px;top:1060.4px" width="13.6" height="15.2" viewBox="0 0 34 38"><path d="M2 2L32 2L20 17L20 34L14 36L14 17Z" fill="#9aa7b0"/></svg>
<div class="a" style="left:2702.8px;top:1049.6px;width:2.4px;height:38.4px;background:#e9f3fa;"></div>
<div class="a h" style="left:2715.2px;top:1062.4px;transform:scaleX(0.9951);transform-origin:0 0;">+/- DAYS</div>
<svg class="a" style="left:2782.4px;top:1060.4px" width="13.6" height="15.2" viewBox="0 0 34 38"><path d="M2 2L32 2L20 17L20 34L14 36L14 17Z" fill="#9aa7b0"/></svg>
<div class="a" style="left:2810.8px;top:1049.6px;width:2.4px;height:38.4px;background:#e9f3fa;"></div>
<div class="a h" style="left:2872px;top:1062.4px;transform:scaleX(0.9436);transform-origin:0 0;">SENT DATE</div>
<svg class="a" style="left:2969.2px;top:1060.4px" width="13.6" height="15.2" viewBox="0 0 34 38"><path d="M2 2L32 2L20 17L20 34L14 36L14 17Z" fill="#9aa7b0"/></svg>
<div class="a" style="left:3002.8px;top:1049.6px;width:2.4px;height:38.4px;background:#e9f3fa;"></div>
<div class="a h" style="left:3010.4px;top:1062.4px;transform:scaleX(1.0525);transform-origin:0 0;">BUY</div>
<svg class="a" style="left:53.2px;top:1096px" width="19.2" height="19.2" viewBox="0 0 40 40"><circle cx="20" cy="20" r="17" fill="#f4f4f4" stroke="#bcbcbc" stroke-width="4"/><path d="M17 12L25 20L17 28" fill="none" stroke="#a0a0a0" stroke-width="4.5"/></svg>
<div class="a t" style="left:96.8px;top:1098.8px;font-size:19.2px;color:#2a2a2a;">+/- Days: -11</div>
<div class="a" style="left:42.4px;top:1125.28px;width:2995.6px;height:2.4px;background:#e3e3e3;"></div>
<svg class="a" style="left:53.2px;top:1135.28px" width="19.2" height="19.2" viewBox="0 0 40 40"><circle cx="20" cy="20" r="17" fill="#f4f4f4" stroke="#bcbcbc" stroke-width="4"/><path d="M17 12L25 20L17 28" fill="none" stroke="#a0a0a0" stroke-width="4.5"/></svg>
<div class="a t" style="left:96.8px;top:1138.08px;font-size:19.2px;color:#2a2a2a;">+/- Days: -10</div>
<div class="a" style="left:42.4px;top:1164.56px;width:2995.6px;height:2.4px;background:#e3e3e3;"></div>
<svg class="a" style="left:53.2px;top:1174.56px" width="19.2" height="19.2" viewBox="0 0 40 40"><circle cx="20" cy="20" r="17" fill="#f4f4f4" stroke="#bcbcbc" stroke-width="4"/><path d="M17 12L25 20L17 28" fill="none" stroke="#a0a0a0" stroke-width="4.5"/></svg>
<div class="a t" style="left:96.8px;top:1177.36px;font-size:19.2px;color:#2a2a2a;">+/- Days: -8</div>
<div class="a" style="left:42.4px;top:1203.84px;width:2995.6px;height:2.4px;background:#e3e3e3;"></div>
<svg class="a" style="left:53.2px;top:1213.84px" width="19.2" height="19.2" viewBox="0 0 40 40"><circle cx="20" cy="20" r="17" fill="#f4f4f4" stroke="#bcbcbc" stroke-width="4"/><path d="M17 12L25 20L17 28" fill="none" stroke="#a0a0a0" stroke-width="4.5"/></svg>
<div class="a t" style="left:96.8px;top:1216.64px;font-size:19.2px;color:#2a2a2a;">+/- Days: -7</div>
<div class="a" style="left:42.4px;top:1243.12px;width:2995.6px;height:2.4px;background:#e3e3e3;"></div>
<svg class="a" style="left:53.2px;top:1253.12px" width="19.2" height="19.2" viewBox="0 0 40 40"><circle cx="20" cy="20" r="17" fill="#f4f4f4" stroke="#bcbcbc" stroke-width="4"/><path d="M17 12L25 20L17 28" fill="none" stroke="#a0a0a0" stroke-width="4.5"/></svg>
<div class="a t" style="left:96.8px;top:1255.92px;font-size:19.2px;color:#2a2a2a;">+/- Days: -1</div>
<div class="a" style="left:42.4px;top:1282.4px;width:2995.6px;height:2.4px;background:#e3e3e3;"></div>
<svg class="a" style="left:53.2px;top:1292.4px" width="19.2" height="19.2" viewBox="0 0 40 40"><circle cx="20" cy="20" r="17" fill="#f4f4f4" stroke="#bcbcbc" stroke-width="4"/><path d="M17 12L25 20L17 28" fill="none" stroke="#a0a0a0" stroke-width="4.5"/></svg>
<div class="a t" style="left:96.8px;top:1295.2px;font-size:19.2px;color:#2a2a2a;">+/- Days: 0</div>
<div class="a" style="left:42.4px;top:1321.68px;width:2995.6px;height:2.4px;background:#e3e3e3;"></div>
<svg class="a" style="left:53.2px;top:1331.68px" width="19.2" height="19.2" viewBox="0 0 40 40"><circle cx="20" cy="20" r="17" fill="#f4f4f4" stroke="#bcbcbc" stroke-width="4"/><path d="M17 12L25 20L17 28" fill="none" stroke="#a0a0a0" stroke-width="4.5"/></svg>
<div class="a t" style="left:96.8px;top:1334.48px;font-size:19.2px;color:#2a2a2a;">+/- Days: 3</div>
<div class="a" style="left:42.4px;top:1360.96px;width:2995.6px;height:2.4px;background:#e3e3e3;"></div>
<div class="a" style="left:80px;top:1394.88px;width:2958px;height:2.4px;background:#dcdcdc;"></div>
<div class="a" style="left:100px;top:1370px;width:23.2px;height:21.6px;background:#fff;border:2.4px solid #b4b4b4;border-radius:3.2px;"></div>
<div class="a t lnk r" style="left:140px;top:1371.6px;width:92px;">A0221</div>
<svg class="a" style="left:236.8px;top:1368.8px" width="17.6" height="18.4" viewBox="0 0 44 46"><rect x="6" y="10" width="24" height="30" fill="none" stroke="#e2574c" stroke-width="5"/><path d="M18 4L40 4L40 28" fill="none" stroke="#e2574c" stroke-width="5"/></svg>
<svg class="a" style="left:282.8px;top:1370.2px" width="18.8" height="18" viewBox="0 0 48 48" preserveAspectRatio="none"><rect x="2" y="2" width="44" height="44" rx="7" fill="#f5851f"/><path d="M24 12L33 24L27 24L27 36L21 36L21 24L15 24Z" fill="#fff" opacity="0.8"/></svg>
<div class="a t" style="left:310.4px;top:1371.6px;">Sent</div>
<div class="a t" style="left:428px;top:1371.6px;">WOC90054066</div>
<svg class="a" style="left:574.4px;top:1370.2px" width="18.8" height="18" viewBox="0 0 48 48" preserveAspectRatio="none"><rect x="2" y="2" width="44" height="44" rx="7" fill="#2ab759"/><path d="M24 12L33 24L27 24L27 36L21 36L21 24L15 24Z" fill="#fff" opacity="0.8"/></svg>
<div class="a t" style="left:599.2px;top:1371.6px;">Confirmed</div>
<div class="a t" style="left:722px;top:1371.6px;"></div>
<div class="a t" style="left:898px;top:1371.6px;">Unassigned</div>
<div class="a t" style="left:1040px;top:1371.6px;">External Agency</div>
<div class="a t" style="left:1190px;top:1371.6px;">TVB Test Advertiser</div>
<div class="a t" style="left:1368px;top:1371.6px;">TST</div>
<div class="a t" style="left:1466px;top:1371.6px;">400</div>
<div class="a t" style="left:1588px;top:1371.6px;">19220</div>
<div class="a t" style="left:1746px;top:1371.6px;">National</div>
<div class="a t" style="left:1896px;top:1371.6px;">Allstate 400</div>
<div class="a t" style="left:2054px;top:1371.6px;">Dubai TV</div>
<div class="a t r" style="left:2164px;top:1371.6px;width:150.8px;">50.00</div>
<div class="a t r" style="left:2326px;top:1371.6px;width:162.8px;">40.00</div>
<div class="a t r" style="left:2500px;top:1371.6px;width:192.8px;">2/13/23</div>
<div class="a t r" style="left:2704px;top:1371.6px;width:96.8px;">3</div>
<div class="a t r" style="left:2812px;top:1371.6px;width:180.8px;">1/12/23 10:24:29 AM</div>
<div class="a t" style="left:3014px;top:1371.6px;">182</div>
<div class="a" style="left:78.8px;top:1360.4px;width:2.4px;height:35.68px;background:#dcdcdc;"></div>
<div class="a" style="left:138.8px;top:1360.4px;width:2.4px;height:35.68px;background:#dcdcdc;"></div>
<div class="a" style="left:268px;top:1360.4px;width:2.4px;height:35.68px;background:#dcdcdc;"></div>
<div class="a" style="left:416.8px;top:1360.4px;width:2.4px;height:35.68px;background:#dcdcdc;"></div>
<div class="a" style="left:558.8px;top:1360.4px;width:2.4px;height:35.68px;background:#dcdcdc;"></div>
<div class="a" style="left:710.8px;top:1360.4px;width:2.4px;height:35.68px;background:#dcdcdc;"></div>
<div class="a" style="left:886.8px;top:1360.4px;width:2.4px;height:35.68px;background:#dcdcdc;"></div>
<div class="a" style="left:1028.8px;top:1360.4px;width:2.4px;height:35.68px;background:#dcdcdc;"></div>
<div class="a" style="left:1178.8px;top:1360.4px;width:2.4px;height:35.68px;background:#dcdcdc;"></div>
<div class="a" style="left:1356.8px;top:1360.4px;width:2.4px;height:35.68px;background:#dcdcdc;"></div>
<div class="a" style="left:1454.8px;top:1360.4px;width:2.4px;height:35.68px;background:#dcdcdc;"></div>
<div class="a" style="left:1576.8px;top:1360.4px;width:2.4px;height:35.68px;background:#dcdcdc;"></div>
<div class="a" style="left:1734.8px;top:1360.4px;width:2.4px;height:35.68px;background:#dcdcdc;"></div>
<div class="a" style="left:1884.8px;top:1360.4px;width:2.4px;height:35.68px;background:#dcdcdc;"></div>
<div class="a" style="left:2042.8px;top:1360.4px;width:2.4px;height:35.68px;background:#dcdcdc;"></div>
<div class="a" style="left:2162.8px;top:1360.4px;width:2.4px;height:35.68px;background:#dcdcdc;"></div>
<div class="a" style="left:2324.8px;top:1360.4px;width:2.4px;height:35.68px;background:#dcdcdc;"></div>
<div class="a" style="left:2498.8px;top:1360.4px;width:2.4px;height:35.68px;background:#dcdcdc;"></div>
<div class="a" style="left:2702.8px;top:1360.4px;width:2.4px;height:35.68px;background:#dcdcdc;"></div>
<div class="a" style="left:2810.8px;top:1360.4px;width:2.4px;height:35.68px;background:#dcdcdc;"></div>
<div class="a" style="left:3002.8px;top:1360.4px;width:2.4px;height:35.68px;background:#dcdcdc;"></div>
<div class="a" style="left:80px;top:1430.56px;width:2958px;height:2.4px;background:#dcdcdc;"></div>
<div class="a" style="left:100px;top:1405.68px;width:23.2px;height:21.6px;background:#fff;border:2.4px solid #b4b4b4;border-radius:3.2px;"></div>
<div class="a t lnk r" style="left:140px;top:1407.28px;width:92px;">A0321</div>
<svg class="a" style="left:236.8px;top:1404.08px" width="19.2" height="17.2" viewBox="0 0 44 44" preserveAspectRatio="none"><path d="M4 40L8 28L30 6L38 14L16 36Z" fill="#4caf50"/><path d="M32 4L36 0L44 8L40 12Z" fill="#3a9a3f"/></svg>
<svg class="a" style="left:282.8px;top:1405.88px" width="18.8" height="18" viewBox="0 0 48 48" preserveAspectRatio="none"><rect x="2" y="2" width="44" height="44" rx="7" fill="#f5851f"/><path d="M24 12L33 24L27 24L27 36L21 36L21 24L15 24Z" fill="#fff" opacity="0.8"/></svg>
<div class="a t" style="left:310.4px;top:1407.28px;">Sent</div>
<div class="a t" style="left:428px;top:1407.28px;">WOC90056021</div>
<svg class="a" style="left:574.4px;top:1405.88px" width="18.8" height="18" viewBox="0 0 48 48" preserveAspectRatio="none"><rect x="2" y="2" width="44" height="44" rx="7" fill="#2ab759"/><path d="M24 12L33 24L27 24L27 36L21 36L21 24L15 24Z" fill="#fff" opacity="0.8"/></svg>
<div class="a t" style="left:599.2px;top:1407.28px;">Confirmed</div>
<div class="a t" style="left:722px;top:1407.28px;"></div>
<div class="a t" style="left:898px;top:1407.28px;">Unassigned</div>
<div class="a t" style="left:1040px;top:1407.28px;">QA Test Agency</div>
<div class="a t" style="left:1190px;top:1407.28px;">QA Test Advertiser</div>
<div class="a t" style="left:1368px;top:1407.28px;">RE1</div>
<div class="a t" style="left:1466px;top:1407.28px;">W135 / PR15</div>
<div class="a t" style="left:1588px;top:1407.28px;">E22535</div>
<div class="a t" style="left:1746px;top:1407.28px;">National</div>
<div class="a t" style="left:1896px;top:1407.28px;">QA Product</div>
<div class="a t" style="left:2054px;top:1407.28px;">Dubai TV</div>
<div class="a t r" style="left:2164px;top:1407.28px;width:150.8px;">100.00</div>
<div class="a t r" style="left:2326px;top:1407.28px;width:162.8px;">400.00</div>
<div class="a t r" style="left:2500px;top:1407.28px;width:192.8px;">2/13/23</div>
<div class="a t r" style="left:2704px;top:1407.28px;width:96.8px;">3</div>
<div class="a t r" style="left:2812px;top:1407.28px;width:180.8px;">2/7/23 6:57:47 AM</div>
<div class="a t" style="left:3014px;top:1407.28px;">210</div>
<div class="a" style="left:78.8px;top:1396.08px;width:2.4px;height:35.68px;background:#dcdcdc;"></div>
<div class="a" style="left:138.8px;top:1396.08px;width:2.4px;height:35.68px;background:#dcdcdc;"></div>
<div class="a" style="left:268px;top:1396.08px;width:2.4px;height:35.68px;background:#dcdcdc;"></div>
<div class="a" style="left:416.8px;top:1396.08px;width:2.4px;height:35.68px;background:#dcdcdc;"></div>
<div class="a" style="left:558.8px;top:1396.08px;width:2.4px;height:35.68px;background:#dcdcdc;"></div>
<div class="a" style="left:710.8px;top:1396.08px;width:2.4px;height:35.68px;background:#dcdcdc;"></div>
<div class="a" style="left:886.8px;top:1396.08px;width:2.4px;height:35.68px;background:#dcdcdc;"></div>
<div class="a" style="left:1028.8px;top:1396.08px;width:2.4px;height:35.68px;background:#dcdcdc;"></div>
<div class="a" style="left:1178.8px;top:1396.08px;width:2.4px;height:35.68px;background:#dcdcdc;"></div>
<div class="a" style="left:1356.8px;top:1396.08px;width:2.4px;height:35.68px;background:#dcdcdc;"></div>
<div class="a" style="left:1454.8px;top:1396.08px;width:2.4px;height:35.68px;background:#dcdcdc;"></div>
<div class="a" style="left:1576.8px;top:1396.08px;width:2.4px;height:35.68px;background:#dcdcdc;"></div>
<div class="a" style="left:1734.8px;top:1396.08px;width:2.4px;height:35.68px;background:#dcdcdc;"></div>
<div class="a" style="left:1884.8px;top:1396.08px;width:2.4px;height:35.68px;background:#dcdcdc;"></div>
<div class="a" style="left:2042.8px;top:1396.08px;width:2.4px;height:35.68px;background:#dcdcdc;"></div>
<div class="a" style="left:2162.8px;top:1396.08px;width:2.4px;height:35.68px;background:#dcdcdc;"></div>
<div class="a" style="left:2324.8px;top:1396.08px;width:2.4px;height:35.68px;background:#dcdcdc;"></div>
<div class="a" style="left:2498.8px;top:1396.08px;width:2.4px;height:35.68px;background:#dcdcdc;"></div>
<div class="a" style="left:2702.8px;top:1396.08px;width:2.4px;height:35.68px;background:#dcdcdc;"></div>
<div class="a" style="left:2810.8px;top:1396.08px;width:2.4px;height:35.68px;background:#dcdcdc;"></div>
<div class="a" style="left:3002.8px;top:1396.08px;width:2.4px;height:35.68px;background:#dcdcdc;"></div>
<div class="a" style="left:80px;top:1466.24px;width:2958px;height:2.4px;background:#dcdcdc;"></div>
<div class="a" style="left:100px;top:1441.36px;width:23.2px;height:21.6px;background:#fff;border:2.4px solid #b4b4b4;border-radius:3.2px;"></div>
<div class="a t lnk r" style="left:140px;top:1442.96px;width:92px;">A0221</div>
<svg class="a" style="left:236.8px;top:1439.76px" width="19.2" height="17.2" viewBox="0 0 44 44" preserveAspectRatio="none"><path d="M4 40L8 28L30 6L38 14L16 36Z" fill="#4caf50"/><path d="M32 4L36 0L44 8L40 12Z" fill="#3a9a3f"/></svg>
<svg class="a" style="left:282.8px;top:1441.56px" width="18.8" height="18" viewBox="0 0 48 48" preserveAspectRatio="none"><rect x="2" y="2" width="44" height="44" rx="7" fill="#f5851f"/><path d="M24 12L33 24L27 24L27 36L21 36L21 24L15 24Z" fill="#fff" opacity="0.8"/></svg>
<div class="a t" style="left:310.4px;top:1442.96px;">Sent</div>
<div class="a t" style="left:428px;top:1442.96px;">WOC90056035</div>
<svg class="a" style="left:574.4px;top:1441.56px" width="18.8" height="18" viewBox="0 0 48 48" preserveAspectRatio="none"><rect x="2" y="2" width="44" height="44" rx="7" fill="#2ab759"/><path d="M24 12L33 24L27 24L27 36L21 36L21 24L15 24Z" fill="#fff" opacity="0.8"/></svg>
<div class="a t" style="left:599.2px;top:1442.96px;">Confirmed</div>
<div class="a t" style="left:722px;top:1442.96px;"></div>
<div class="a t" style="left:898px;top:1442.96px;">Unassigned</div>
<div class="a t" style="left:1040px;top:1442.96px;">QA Test Agency</div>
<div class="a t" style="left:1190px;top:1442.96px;">QA Test Advertiser</div>
<div class="a t" style="left:1368px;top:1442.96px;">RE1</div>
<div class="a t" style="left:1466px;top:1442.96px;">W135 / PR15</div>
<div class="a t" style="left:1588px;top:1442.96px;">E21556</div>
<div class="a t" style="left:1746px;top:1442.96px;">National</div>
<div class="a t" style="left:1896px;top:1442.96px;">QA Product</div>
<div class="a t" style="left:2054px;top:1442.96px;">Dubai TV</div>
<div class="a t r" style="left:2164px;top:1442.96px;width:150.8px;">300.00</div>
<div class="a t r" style="left:2326px;top:1442.96px;width:162.8px;">200.00</div>
<div class="a t r" style="left:2500px;top:1442.96px;width:192.8px;">2/13/23</div>
<div class="a t r" style="left:2704px;top:1442.96px;width:96.8px;">3</div>
<div class="a t r" style="left:2812px;top:1442.96px;width:180.8px;">2/9/23 2:06:28 AM</div>
<div class="a t" style="left:3014px;top:1442.96px;">210</div>
<div class="a" style="left:78.8px;top:1431.76px;width:2.4px;height:35.68px;background:#dcdcdc;"></div>
<div class="a" style="left:138.8px;top:1431.76px;width:2.4px;height:35.68px;background:#dcdcdc;"></div>
<div class="a" style="left:268px;top:1431.76px;width:2.4px;height:35.68px;background:#dcdcdc;"></div>
<div class="a" style="left:416.8px;top:1431.76px;width:2.4px;height:35.68px;background:#dcdcdc;"></div>
<div class="a" style="left:558.8px;top:1431.76px;width:2.4px;height:35.68px;background:#dcdcdc;"></div>
<div class="a" style="left:710.8px;top:1431.76px;width:2.4px;height:35.68px;background:#dcdcdc;"></div>
<div class="a" style="left:886.8px;top:1431.76px;width:2.4px;height:35.68px;background:#dcdcdc;"></div>
<div class="a" style="left:1028.8px;top:1431.76px;width:2.4px;height:35.68px;background:#dcdcdc;"></div>
<div class="a" style="left:1178.8px;top:1431.76px;width:2.4px;height:35.68px;background:#dcdcdc;"></div>
<div class="a" style="left:1356.8px;top:1431.76px;width:2.4px;height:35.68px;background:#dcdcdc;"></div>
<div class="a" style="left:1454.8px;top:1431.76px;width:2.4px;height:35.68px;background:#dcdcdc;"></div>
<div class="a" style="left:1576.8px;top:1431.76px;width:2.4px;height:35.68px;background:#dcdcdc;"></div>
<div class="a" style="left:1734.8px;top:1431.76px;width:2.4px;height:35.68px;background:#dcdcdc;"></div>
<div class="a" style="left:1884.8px;top:1431.76px;width:2.4px;height:35.68px;background:#dcdcdc;"></div>
<div class="a" style="left:2042.8px;top:1431.76px;width:2.4px;height:35.68px;background:#dcdcdc;"></div>
<div class="a" style="left:2162.8px;top:1431.76px;width:2.4px;height:35.68px;background:#dcdcdc;"></div>
<div class="a" style="left:2324.8px;top:1431.76px;width:2.4px;height:35.68px;background:#dcdcdc;"></div>
<div class="a" style="left:2498.8px;top:1431.76px;width:2.4px;height:35.68px;background:#dcdcdc;"></div>
<div class="a" style="left:2702.8px;top:1431.76px;width:2.4px;height:35.68px;background:#dcdcdc;"></div>
<div class="a" style="left:2810.8px;top:1431.76px;width:2.4px;height:35.68px;background:#dcdcdc;"></div>
<div class="a" style="left:3002.8px;top:1431.76px;width:2.4px;height:35.68px;background:#dcdcdc;"></div>
<div class="a" style="left:80px;top:1501.92px;width:2958px;height:2.4px;background:#dcdcdc;"></div>
<div class="a" style="left:100px;top:1477.04px;width:23.2px;height:21.6px;background:#fff;border:2.4px solid #b4b4b4;border-radius:3.2px;"></div>
<div class="a t lnk r" style="left:140px;top:1478.64px;width:92px;">A0321</div>
<svg class="a" style="left:236.8px;top:1475.44px" width="19.2" height="17.2" viewBox="0 0 44 44" preserveAspectRatio="none"><path d="M4 40L8 28L30 6L38 14L16 36Z" fill="#4caf50"/><path d="M32 4L36 0L44 8L40 12Z" fill="#3a9a3f"/></svg>
<svg class="a" style="left:282.8px;top:1477.24px" width="18.8" height="18" viewBox="0 0 48 48" preserveAspectRatio="none"><rect x="2" y="2" width="44" height="44" rx="7" fill="#f5851f"/><path d="M24 12L33 24L27 24L27 36L21 36L21 24L15 24Z" fill="#fff" opacity="0.8"/></svg>
<div class="a t" style="left:310.4px;top:1478.64px;">Sent</div>
<div class="a t" style="left:428px;top:1478.64px;">WOC90056035</div>
<svg class="a" style="left:574.4px;top:1477.24px" width="18.8" height="18" viewBox="0 0 48 48" preserveAspectRatio="none"><rect x="2" y="2" width="44" height="44" rx="7" fill="#2ab759"/><path d="M24 12L33 24L27 24L27 36L21 36L21 24L15 24Z" fill="#fff" opacity="0.8"/></svg>
<div class="a t" style="left:599.2px;top:1478.64px;">Confirmed</div>
<div class="a t" style="left:722px;top:1478.64px;"></div>
<div class="a t" style="left:898px;top:1478.64px;">Unassigned</div>
<div class="a t" style="left:1040px;top:1478.64px;">QA Test Agency</div>
<div class="a t" style="left:1190px;top:1478.64px;">QA Test Advertiser</div>
<div class="a t" style="left:1368px;top:1478.64px;">RE1</div>
<div class="a t" style="left:1466px;top:1478.64px;">W135 / PR15</div>
<div class="a t" style="left:1588px;top:1478.64px;">E21556</div>
<div class="a t" style="left:1746px;top:1478.64px;">National</div>
<div class="a t" style="left:1896px;top:1478.64px;">QA Product</div>
<div class="a t" style="left:2054px;top:1478.64px;">Dubai TV</div>
<div class="a t r" style="left:2164px;top:1478.64px;width:150.8px;">0.00</div>
<div class="a t r" style="left:2326px;top:1478.64px;width:162.8px;">400.00</div>
<div class="a t r" style="left:2500px;top:1478.64px;width:192.8px;">2/13/23</div>
<div class="a t r" style="left:2704px;top:1478.64px;width:96.8px;">3</div>
<div class="a t r" style="left:2812px;top:1478.64px;width:180.8px;">2/9/23 2:06:38 AM</div>
<div class="a t" style="left:3014px;top:1478.64px;">210</div>
<div class="a" style="left:78.8px;top:1467.44px;width:2.4px;height:35.68px;background:#dcdcdc;"></div>
<div class="a" style="left:138.8px;top:1467.44px;width:2.4px;height:35.68px;background:#dcdcdc;"></div>
<div class="a" style="left:268px;top:1467.44px;width:2.4px;height:35.68px;background:#dcdcdc;"></div>
<div class="a" style="left:416.8px;top:1467.44px;width:2.4px;height:35.68px;background:#dcdcdc;"></div>
<div class="a" style="left:558.8px;top:1467.44px;width:2.4px;height:35.68px;background:#dcdcdc;"></div>
<div class="a" style="left:710.8px;top:1467.44px;width:2.4px;height:35.68px;background:#dcdcdc;"></div>
<div class="a" style="left:886.8px;top:1467.44px;width:2.4px;height:35.68px;background:#dcdcdc;"></div>
<div class="a" style="left:1028.8px;top:1467.44px;width:2.4px;height:35.68px;background:#dcdcdc;"></div>
<div class="a" style="left:1178.8px;top:1467.44px;width:2.4px;height:35.68px;background:#dcdcdc;"></div>
<div class="a" style="left:1356.8px;top:1467.44px;width:2.4px;height:35.68px;background:#dcdcdc;"></div>
<div class="a" style="left:1454.8px;top:1467.44px;width:2.4px;height:35.68px;background:#dcdcdc;"></div>
<div class="a" style="left:1576.8px;top:1467.44px;width:2.4px;height:35.68px;background:#dcdcdc;"></div>
<div class="a" style="left:1734.8px;top:1467.44px;width:2.4px;height:35.68px;background:#dcdcdc;"></div>
<div class="a" style="left:1884.8px;top:1467.44px;width:2.4px;height:35.68px;background:#dcdcdc;"></div>
<div class="a" style="left:2042.8px;top:1467.44px;width:2.4px;height:35.68px;background:#dcdcdc;"></div>
<div class="a" style="left:2162.8px;top:1467.44px;width:2.4px;height:35.68px;background:#dcdcdc;"></div>
<div class="a" style="left:2324.8px;top:1467.44px;width:2.4px;height:35.68px;background:#dcdcdc;"></div>
<div class="a" style="left:2498.8px;top:1467.44px;width:2.4px;height:35.68px;background:#dcdcdc;"></div>
<div class="a" style="left:2702.8px;top:1467.44px;width:2.4px;height:35.68px;background:#dcdcdc;"></div>
<div class="a" style="left:2810.8px;top:1467.44px;width:2.4px;height:35.68px;background:#dcdcdc;"></div>
<div class="a" style="left:3002.8px;top:1467.44px;width:2.4px;height:35.68px;background:#dcdcdc;"></div>
<div class="a" style="left:80px;top:1537.6px;width:2958px;height:2.4px;background:#dcdcdc;"></div>
<div class="a" style="left:100px;top:1512.72px;width:23.2px;height:21.6px;background:#fff;border:2.4px solid #b4b4b4;border-radius:3.2px;"></div>
<div class="a t lnk r" style="left:140px;top:1514.32px;width:92px;">A0221</div>
<svg class="a" style="left:236.8px;top:1511.12px" width="19.2" height="17.2" viewBox="0 0 44 44" preserveAspectRatio="none"><path d="M4 40L8 28L30 6L38 14L16 36Z" fill="#4caf50"/><path d="M32 4L36 0L44 8L40 12Z" fill="#3a9a3f"/></svg>
<svg class="a" style="left:282.8px;top:1512.92px" width="18.8" height="18" viewBox="0 0 48 48" preserveAspectRatio="none"><rect x="2" y="2" width="44" height="44" rx="7" fill="#f5851f"/><path d="M24 12L33 24L27 24L27 36L21 36L21 24L15 24Z" fill="#fff" opacity="0.8"/></svg>
<div class="a t" style="left:310.4px;top:1514.32px;">Sent</div>
<div class="a t" style="left:428px;top:1514.32px;">WOC90056038</div>
<svg class="a" style="left:574.4px;top:1512.92px" width="18.8" height="18" viewBox="0 0 48 48" preserveAspectRatio="none"><rect x="2" y="2" width="44" height="44" rx="7" fill="#2ab759"/><path d="M24 12L33 24L27 24L27 36L21 36L21 24L15 24Z" fill="#fff" opacity="0.8"/></svg>
<div class="a t" style="left:599.2px;top:1514.32px;">Confirmed</div>
<div class="a t" style="left:722px;top:1514.32px;"></div>
<div class="a t" style="left:898px;top:1514.32px;">Unassigned</div>
<div class="a t" style="left:1040px;top:1514.32px;">QA Test Agency</div>
<div class="a t" style="left:1190px;top:1514.32px;">QA Test Advertiser</div>
<div class="a t" style="left:1368px;top:1514.32px;">RE1</div>
<div class="a t" style="left:1466px;top:1514.32px;">W135 / PR15</div>
<div class="a t" style="left:1588px;top:1514.32px;">E21352</div>
<div class="a t" style="left:1746px;top:1514.32px;">National</div>
<div class="a t" style="left:1896px;top:1514.32px;">QA Product</div>
<div class="a t" style="left:2054px;top:1514.32px;">Dubai TV</div>
<div class="a t r" style="left:2164px;top:1514.32px;width:150.8px;">300.00</div>
<div class="a t r" style="left:2326px;top:1514.32px;width:162.8px;">400.00</div>
<div class="a t r" style="left:2500px;top:1514.32px;width:192.8px;">2/13/23</div>
<div class="a t r" style="left:2704px;top:1514.32px;width:96.8px;">3</div>
<div class="a t r" style="left:2812px;top:1514.32px;width:180.8px;">2/9/23 2:13:33 AM</div>
<div class="a t" style="left:3014px;top:1514.32px;">210</div>
<div class="a" style="left:78.8px;top:1503.12px;width:2.4px;height:35.68px;background:#dcdcdc;"></div>
<div class="a" style="left:138.8px;top:1503.12px;width:2.4px;height:35.68px;background:#dcdcdc;"></div>
<div class="a" style="left:268px;top:1503.12px;width:2.4px;height:35.68px;background:#dcdcdc;"></div>
<div class="a" style="left:416.8px;top:1503.12px;width:2.4px;height:35.68px;background:#dcdcdc;"></div>
<div class="a" style="left:558.8px;top:1503.12px;width:2.4px;height:35.68px;background:#dcdcdc;"></div>
<div class="a" style="left:710.8px;top:1503.12px;width:2.4px;height:35.68px;background:#dcdcdc;"></div>
<div class="a" style="left:886.8px;top:1503.12px;width:2.4px;height:35.68px;background:#dcdcdc;"></div>
<div class="a" style="left:1028.8px;top:1503.12px;width:2.4px;height:35.68px;background:#dcdcdc;"></div>
<div class="a" style="left:1178.8px;top:1503.12px;width:2.4px;height:35.68px;background:#dcdcdc;"></div>
<div class="a" style="left:1356.8px;top:1503.12px;width:2.4px;height:35.68px;background:#dcdcdc;"></div>
<div class="a" style="left:1454.8px;top:1503.12px;width:2.4px;height:35.68px;background:#dcdcdc;"></div>
<div class="a" style="left:1576.8px;top:1503.12px;width:2.4px;height:35.68px;background:#dcdcdc;"></div>
<div class="a" style="left:1734.8px;top:1503.12px;width:2.4px;height:35.68px;background:#dcdcdc;"></div>
<div class="a" style="left:1884.8px;top:1503.12px;width:2.4px;height:35.68px;background:#dcdcdc;"></div>
<div class="a" style="left:2042.8px;top:1503.12px;width:2.4px;height:35.68px;background:#dcdcdc;"></div>
<div class="a" style="left:2162.8px;top:1503.12px;width:2.4px;height:35.68px;background:#dcdcdc;"></div>
<div class="a" style="left:2324.8px;top:1503.12px;width:2.4px;height:35.68px;background:#dcdcdc;"></div>
<div class="a" style="left:2498.8px;top:1503.12px;width:2.4px;height:35.68px;background:#dcdcdc;"></div>
<div class="a" style="left:2702.8px;top:1503.12px;width:2.4px;height:35.68px;background:#dcdcdc;"></div>
<div class="a" style="left:2810.8px;top:1503.12px;width:2.4px;height:35.68px;background:#dcdcdc;"></div>
<div class="a" style="left:3002.8px;top:1503.12px;width:2.4px;height:35.68px;background:#dcdcdc;"></div>
<div class="a" style="left:80px;top:1573.28px;width:2958px;height:2.4px;background:#dcdcdc;"></div>
<div class="a" style="left:100px;top:1548.4px;width:23.2px;height:21.6px;background:#fff;border:2.4px solid #b4b4b4;border-radius:3.2px;"></div>
<div class="a t lnk r" style="left:140px;top:1550px;width:92px;">A0321</div>
<svg class="a" style="left:236.8px;top:1546.8px" width="19.2" height="17.2" viewBox="0 0 44 44" preserveAspectRatio="none"><path d="M4 40L8 28L30 6L38 14L16 36Z" fill="#4caf50"/><path d="M32 4L36 0L44 8L40 12Z" fill="#3a9a3f"/></svg>
<svg class="a" style="left:282.8px;top:1548.6px" width="18.8" height="18" viewBox="0 0 48 48" preserveAspectRatio="none"><rect x="2" y="2" width="44" height="44" rx="7" fill="#f5851f"/><path d="M24 12L33 24L27 24L27 36L21 36L21 24L15 24Z" fill="#fff" opacity="0.8"/></svg>
<div class="a t" style="left:310.4px;top:1550px;">Sent</div>
<div class="a t" style="left:428px;top:1550px;">WOC90056038</div>
<svg class="a" style="left:574.4px;top:1548.6px" width="18.8" height="18" viewBox="0 0 48 48" preserveAspectRatio="none"><rect x="2" y="2" width="44" height="44" rx="7" fill="#2ab759"/><path d="M24 12L33 24L27 24L27 36L21 36L21 24L15 24Z" fill="#fff" opacity="0.8"/></svg>
<div class="a t" style="left:599.2px;top:1550px;">Confirmed</div>
<div class="a t" style="left:722px;top:1550px;"></div>
<div class="a t" style="left:898px;top:1550px;">Unassigned</div>
<div class="a t" style="left:1040px;top:1550px;">QA Test Agency</div>
<div class="a t" style="left:1190px;top:1550px;">QA Test Advertiser</div>
<div class="a t" style="left:1368px;top:1550px;">RE1</div>
<div class="a t" style="left:1466px;top:1550px;">W135 / PR15</div>
<div class="a t" style="left:1588px;top:1550px;">E21352</div>
<div class="a t" style="left:1746px;top:1550px;">National</div>
<div class="a t" style="left:1896px;top:1550px;">QA Product</div>
<div class="a t" style="left:2054px;top:1550px;">Dubai TV</div>
<div class="a t r" style="left:2164px;top:1550px;width:150.8px;">0.00</div>
<div class="a t r" style="left:2326px;top:1550px;width:162.8px;">400.00</div>
<div class="a t r" style="left:2500px;top:1550px;width:192.8px;">2/13/23</div>
<div class="a t r" style="left:2704px;top:1550px;width:96.8px;">3</div>
<div class="a t r" style="left:2812px;top:1550px;width:180.8px;">2/9/23 2:13:29 AM</div>
<div class="a t" style="left:3014px;top:1550px;">210</div>
<div class="a" style="left:78.8px;top:1538.8px;width:2.4px;height:35.68px;background:#dcdcdc;"></div>
<div class="a" style="left:138.8px;top:1538.8px;width:2.4px;height:35.68px;background:#dcdcdc;"></div>
<div class="a" style="left:268px;top:1538.8px;width:2.4px;height:35.68px;background:#dcdcdc;"></div>
<div class="a" style="left:416.8px;top:1538.8px;width:2.4px;height:35.68px;background:#dcdcdc;"></div>
<div class="a" style="left:558.8px;top:1538.8px;width:2.4px;height:35.68px;background:#dcdcdc;"></div>
<div class="a" style="left:710.8px;top:1538.8px;width:2.4px;height:35.68px;background:#dcdcdc;"></div>
<div class="a" style="left:886.8px;top:1538.8px;width:2.4px;height:35.68px;background:#dcdcdc;"></div>
<div class="a" style="left:1028.8px;top:1538.8px;width:2.4px;height:35.68px;background:#dcdcdc;"></div>
<div class="a" style="left:1178.8px;top:1538.8px;width:2.4px;height:35.68px;background:#dcdcdc;"></div>
<div class="a" style="left:1356.8px;top:1538.8px;width:2.4px;height:35.68px;background:#dcdcdc;"></div>
<div class="a" style="left:1454.8px;top:1538.8px;width:2.4px;height:35.68px;background:#dcdcdc;"></div>
<div class="a" style="left:1576.8px;top:1538.8px;width:2.4px;height:35.68px;background:#dcdcdc;"></div>
<div class="a" style="left:1734.8px;top:1538.8px;width:2.4px;height:35.68px;background:#dcdcdc;"></div>
<div class="a" style="left:1884.8px;top:1538.8px;width:2.4px;height:35.68px;background:#dcdcdc;"></div>
<div class="a" style="left:2042.8px;top:1538.8px;width:2.4px;height:35.68px;background:#dcdcdc;"></div>
<div class="a" style="left:2162.8px;top:1538.8px;width:2.4px;height:35.68px;background:#dcdcdc;"></div>
<div class="a" style="left:2324.8px;top:1538.8px;width:2.4px;height:35.68px;background:#dcdcdc;"></div>
<div class="a" style="left:2498.8px;top:1538.8px;width:2.4px;height:35.68px;background:#dcdcdc;"></div>
<div class="a" style="left:2702.8px;top:1538.8px;width:2.4px;height:35.68px;background:#dcdcdc;"></div>
<div class="a" style="left:2810.8px;top:1538.8px;width:2.4px;height:35.68px;background:#dcdcdc;"></div>
<div class="a" style="left:3002.8px;top:1538.8px;width:2.4px;height:35.68px;background:#dcdcdc;"></div>
<div class="a" style="left:80px;top:1608.96px;width:2958px;height:2.4px;background:#dcdcdc;"></div>
<div class="a" style="left:100px;top:1584.08px;width:23.2px;height:21.6px;background:#fff;border:2.4px solid #b4b4b4;border-radius:3.2px;"></div>
<div class="a t lnk r" style="left:140px;top:1585.68px;width:92px;">B0321</div>
<svg class="a" style="left:236.8px;top:1582.48px" width="19.2" height="17.2" viewBox="0 0 44 44" preserveAspectRatio="none"><path d="M4 40L8 28L30 6L38 14L16 36Z" fill="#4caf50"/><path d="M32 4L36 0L44 8L40 12Z" fill="#3a9a3f"/></svg>
<svg class="a" style="left:282.8px;top:1584.28px" width="18.8" height="18" viewBox="0 0 48 48" preserveAspectRatio="none"><rect x="2" y="2" width="44" height="44" rx="7" fill="#f5851f"/><path d="M24 12L33 24L27 24L27 36L21 36L21 24L15 24Z" fill="#fff" opacity="0.8"/></svg>
<div class="a t" style="left:310.4px;top:1585.68px;">Sent</div>
<div class="a t" style="left:428px;top:1585.68px;">WOC90056040</div>
<svg class="a" style="left:574.4px;top:1584.28px" width="18.8" height="18" viewBox="0 0 48 48" preserveAspectRatio="none"><rect x="2" y="2" width="44" height="44" rx="7" fill="#2ab759"/><path d="M24 12L33 24L27 24L27 36L21 36L21 24L15 24Z" fill="#fff" opacity="0.8"/></svg>
<div class="a t" style="left:599.2px;top:1585.68px;">Confirmed</div>
<div class="a t" style="left:722px;top:1585.68px;">24658</div>
<div class="a t" style="left:898px;top:1585.68px;">John AE</div>
<div class="a t" style="left:1040px;top:1585.68px;">QA Test Agency</div>
<div class="a t" style="left:1190px;top:1585.68px;">QA Test Advertiser</div>
<div class="a t" style="left:1368px;top:1585.68px;">RE1</div>
<div class="a t" style="left:1466px;top:1585.68px;">W135 / PR15</div>
<div class="a t" style="left:1588px;top:1585.68px;">E14750</div>
<div class="a t" style="left:1746px;top:1585.68px;">National</div>
<div class="a t" style="left:1896px;top:1585.68px;">QA Product</div>
<div class="a t" style="left:2054px;top:1585.68px;">Dubai TV</div>
<div class="a t r" style="left:2164px;top:1585.68px;width:150.8px;">0.00</div>
<div class="a t r" style="left:2326px;top:1585.68px;width:162.8px;">0.00</div>
<div class="a t r" style="left:2500px;top:1585.68px;width:192.8px;">2/13/23</div>
<div class="a t r" style="left:2704px;top:1585.68px;width:96.8px;">3</div>
<div class="a t r" style="left:2812px;top:1585.68px;width:180.8px;">2/9/23 2:21:31 AM</div>
<div class="a t" style="left:3014px;top:1585.68px;">210</div>
<div class="a" style="left:78.8px;top:1574.48px;width:2.4px;height:35.68px;background:#dcdcdc;"></div>
<div class="a" style="left:138.8px;top:1574.48px;width:2.4px;height:35.68px;background:#dcdcdc;"></div>
<div class="a" style="left:268px;top:1574.48px;width:2.4px;height:35.68px;background:#dcdcdc;"></div>
<div class="a" style="left:416.8px;top:1574.48px;width:2.4px;height:35.68px;background:#dcdcdc;"></div>
<div class="a" style="left:558.8px;top:1574.48px;width:2.4px;height:35.68px;background:#dcdcdc;"></div>
<div class="a" style="left:710.8px;top:1574.48px;width:2.4px;height:35.68px;background:#dcdcdc;"></div>
<div class="a" style="left:886.8px;top:1574.48px;width:2.4px;height:35.68px;background:#dcdcdc;"></div>
<div class="a" style="left:1028.8px;top:1574.48px;width:2.4px;height:35.68px;background:#dcdcdc;"></div>
<div class="a" style="left:1178.8px;top:1574.48px;width:2.4px;height:35.68px;background:#dcdcdc;"></div>
<div class="a" style="left:1356.8px;top:1574.48px;width:2.4px;height:35.68px;background:#dcdcdc;"></div>
<div class="a" style="left:1454.8px;top:1574.48px;width:2.4px;height:35.68px;background:#dcdcdc;"></div>
<div class="a" style="left:1576.8px;top:1574.48px;width:2.4px;height:35.68px;background:#dcdcdc;"></div>
<div class="a" style="left:1734.8px;top:1574.48px;width:2.4px;height:35.68px;background:#dcdcdc;"></div>
<div class="a" style="left:1884.8px;top:1574.48px;width:2.4px;height:35.68px;background:#dcdcdc;"></div>
<div class="a" style="left:2042.8px;top:1574.48px;width:2.4px;height:35.68px;background:#dcdcdc;"></div>
<div class="a" style="left:2162.8px;top:1574.48px;width:2.4px;height:35.68px;background:#dcdcdc;"></div>
<div class="a" style="left:2324.8px;top:1574.48px;width:2.4px;height:35.68px;background:#dcdcdc;"></div>
<div class="a" style="left:2498.8px;top:1574.48px;width:2.4px;height:35.68px;background:#dcdcdc;"></div>
<div class="a" style="left:2702.8px;top:1574.48px;width:2.4px;height:35.68px;background:#dcdcdc;"></div>
<div class="a" style="left:2810.8px;top:1574.48px;width:2.4px;height:35.68px;background:#dcdcdc;"></div>
<div class="a" style="left:3002.8px;top:1574.48px;width:2.4px;height:35.68px;background:#dcdcdc;"></div>
<svg class="a" style="left:53.2px;top:1619.36px" width="19.2" height="19.2" viewBox="0 0 40 40"><circle cx="20" cy="20" r="17" fill="#f4f4f4" stroke="#bcbcbc" stroke-width="4"/><path d="M17 12L25 20L17 28" fill="none" stroke="#a0a0a0" stroke-width="4.5"/></svg>
<div class="a t" style="left:96.8px;top:1622.56px;font-size:19.2px;color:#2a2a2a;">+/- Days: 4</div>
<div class="a" style="left:42.4px;top:1643.36px;width:2995.6px;height:2.4px;background:#e3e3e3;"></div>
<div class="a" style="left:42.4px;top:1651.6px;width:2995.6px;height:2.4px;background:#dcdcdc;"></div>
<div class="a" style="left:42.4px;top:1683.6px;width:2995.6px;height:2.4px;background:#dcdcdc;"></div>
<div class="a" style="left:78.8px;top:1652.8px;width:2.4px;height:32px;background:#dcdcdc;"></div>
<div class="a" style="left:138.8px;top:1652.8px;width:2.4px;height:32px;background:#dcdcdc;"></div>
<div class="a" style="left:268px;top:1652.8px;width:2.4px;height:32px;background:#dcdcdc;"></div>
<div class="a" style="left:416.8px;top:1652.8px;width:2.4px;height:32px;background:#dcdcdc;"></div>
<div class="a" style="left:558.8px;top:1652.8px;width:2.4px;height:32px;background:#dcdcdc;"></div>
<div class="a" style="left:710.8px;top:1652.8px;width:2.4px;height:32px;background:#dcdcdc;"></div>
<div class="a" style="left:886.8px;top:1652.8px;width:2.4px;height:32px;background:#dcdcdc;"></div>
<div class="a" style="left:1028.8px;top:1652.8px;width:2.4px;height:32px;background:#dcdcdc;"></div>
<div class="a" style="left:1178.8px;top:1652.8px;width:2.4px;height:32px;background:#dcdcdc;"></div>
<div class="a" style="left:1356.8px;top:1652.8px;width:2.4px;height:32px;background:#dcdcdc;"></div>
<div class="a" style="left:1454.8px;top:1652.8px;width:2.4px;height:32px;background:#dcdcdc;"></div>
<div class="a" style="left:1576.8px;top:1652.8px;width:2.4px;height:32px;background:#dcdcdc;"></div>
<div class="a" style="left:1734.8px;top:1652.8px;width:2.4px;height:32px;background:#dcdcdc;"></div>
<div class="a" style="left:1884.8px;top:1652.8px;width:2.4px;height:32px;background:#dcdcdc;"></div>
<div class="a" style="left:2042.8px;top:1652.8px;width:2.4px;height:32px;background:#dcdcdc;"></div>
<div class="a" style="left:2162.8px;top:1652.8px;width:2.4px;height:32px;background:#dcdcdc;"></div>
<div class="a" style="left:2324.8px;top:1652.8px;width:2.4px;height:32px;background:#dcdcdc;"></div>
<div class="a" style="left:2498.8px;top:1652.8px;width:2.4px;height:32px;background:#dcdcdc;"></div>
<div class="a" style="left:2702.8px;top:1652.8px;width:2.4px;height:32px;background:#dcdcdc;"></div>
<div class="a" style="left:2810.8px;top:1652.8px;width:2.4px;height:32px;background:#dcdcdc;"></div>
<div class="a" style="left:3002.8px;top:1652.8px;width:2.4px;height:32px;background:#dcdcdc;"></div>
<div class="a t r" style="left:2164px;top:1662px;width:150.8px;font-weight:bold;font-size:17.6px;">56,490.00</div>
<div class="a t r" style="left:2326px;top:1662px;width:162.8px;font-weight:bold;font-size:17.6px;">41,449.33</div>
<div class="a" style="left:42.4px;top:1688px;width:2995.6px;height:21.6px;background:#f0f0f0;"></div>
<div class="a" style="left:70px;top:1688.8px;width:2682px;height:20px;background:#b4b4b4;"></div>
<svg class="a" style="left:50.4px;top:1693.6px" width="9.6" height="10.4" viewBox="0 0 24 26"><path d="M20 2L4 13L20 24Z" fill="#666"/></svg>
<svg class="a" style="left:3018.4px;top:1693.6px" width="9.6" height="10.4" viewBox="0 0 24 26"><path d="M4 2L20 13L4 24Z" fill="#666"/></svg>
<svg class="a" style="left:59.4px;top:1724.6px" width="38.8" height="38.8" viewBox="-4.85 -4.85 9.7 9.7"><circle cx="0" cy="0" r="4.25" fill="#fff" stroke="#686868" stroke-width="0.85"/><path d="M0.9 -1.3L-0.9 0L0.9 1.3Z" fill="#686868"/></svg>
<div class="a " style="left:116.4px;top:1733.6px;width:40px;text-align:center;font-size:21.6px;color:#8e8e8e;-webkit-text-stroke:0.88px currentColor;">1</div>
<div class="a " style="left:180.8px;top:1733.6px;width:40px;text-align:center;font-size:21.6px;color:#8e8e8e;-webkit-text-stroke:0.88px currentColor;">2</div>
<div class="a " style="left:245.2px;top:1733.6px;width:40px;text-align:center;font-size:21.6px;color:#8e8e8e;-webkit-text-stroke:0.88px currentColor;">3</div>
<div class="a" style="left:300px;top:1725.6px;width:55.2px;height:34px;background:#ff8200;"></div>
<div class="a " style="left:300px;top:1734px;width:55.2px;text-align:center;font-size:20px;color:#ffd9ae;">4</div>
<div class="a " style="left:370.8px;top:1733.6px;width:40px;text-align:center;font-size:21.6px;color:#8e8e8e;-webkit-text-stroke:0.88px currentColor;">5</div>
<svg class="a" style="left:428.4px;top:1724px" width="39.2" height="39.2" viewBox="-4.8999999999999995 -4.8999999999999995 9.799999999999999 9.799999999999999"><circle cx="0" cy="0" r="4.3" fill="#fff" stroke="#686868" stroke-width="0.85"/><path d="M-0.9 -1.3L0.9 0L-0.9 1.3Z" fill="#686868"/></svg>
<div class="a " style="left:2815.6px;top:1735.6px;font-size:19.6px;color:#555;">Page size:</div>
<div class="a" style="left:2910.8px;top:1724.8px;width:83.2px;height:38.4px;background:#fff;border:2.4px solid #ddd;"></div>
<div class="a " style="left:2922.4px;top:1735.6px;font-size:19.2px;color:#444;">15</div>
<svg class="a" style="left:2970.4px;top:1741.6px" width="10.4" height="8" viewBox="0 0 26 20"><path d="M2 3L24 3L13 17Z" fill="#777"/></svg>
<div class="a" style="left:42.4px;top:1772.4px;width:2995.6px;height:2.4px;background:#dcdcdc;"></div>
<svg class="a" style="left:54.4px;top:1789.6px" width="12.8" height="14.4" viewBox="0 0 34 38"><path d="M2 2L32 2L20 17L20 34L14 36L14 17Z" fill="#999"/></svg>
<div class="a " style="left:72px;top:1789.2px;font-size:22px;color:#f59640;text-decoration:underline;">Create Filter</div>
<div class="a " style="left:53.2px;top:1845.6px;font-size:18px;color:#555;">v2023.2.22.725 © 2023 WideOrbit Inc.</div>
<div class="a" style="left:0px;top:1867.2px;width:1572px;height:4.8px;background:#9a9a9a;"></div>
<div class="a" style="left:1572px;top:1867.2px;width:348px;height:4.8px;background:#c4c4c4;"></div>
<div class="a" style="left:1920px;top:1867.2px;width:1152px;height:4.8px;background:#dedede;"></div>
</div></body></html>
